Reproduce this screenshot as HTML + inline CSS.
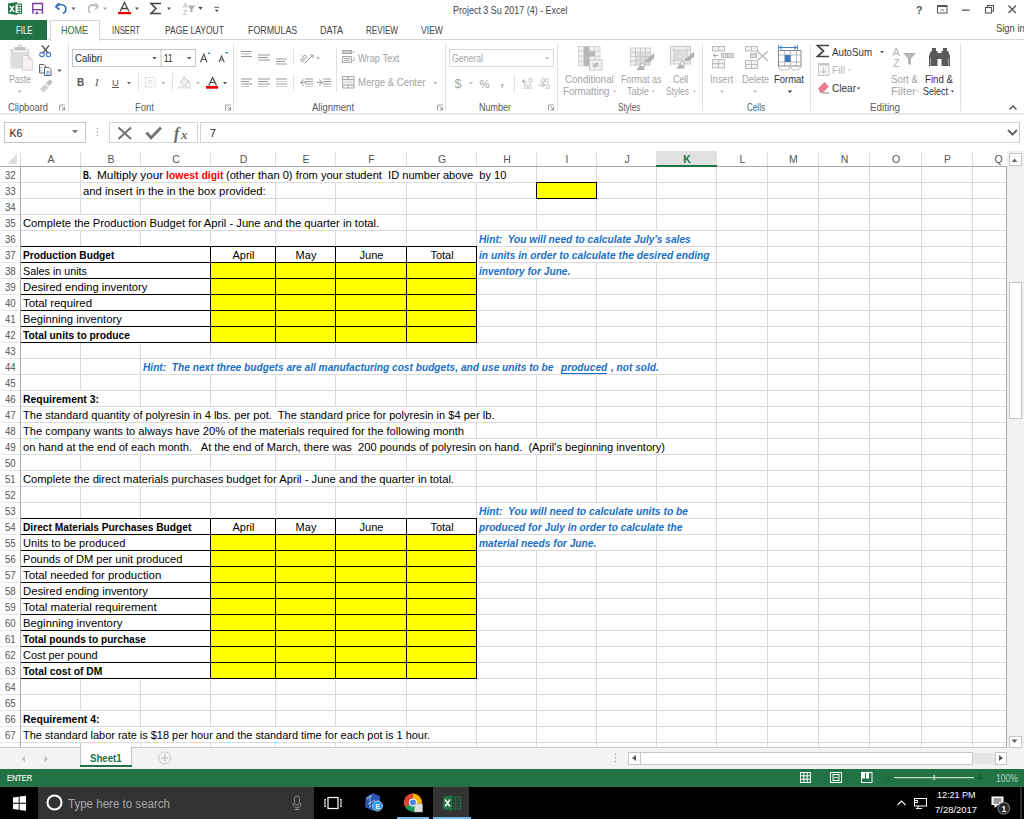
<!DOCTYPE html>
<html><head><meta charset="utf-8"><style>
html,body{margin:0;padding:0;width:1024px;height:819px;overflow:hidden;background:#fff;position:relative;font-family:"Liberation Sans", sans-serif;}
.t{position:absolute;white-space:pre;line-height:20px;font-family:"Liberation Sans", sans-serif;}
svg{position:absolute;overflow:visible}
</style></head><body>
<div style="position:absolute;left:0px;top:39px;width:1024px;height:1px;background:#d5d5d5;"></div>
<div style="position:absolute;left:0px;top:113px;width:1024px;height:1px;background:#dedede;"></div>
<div style="position:absolute;left:0px;top:114px;width:1024px;height:1px;background:#f2f2f2;"></div>
<div style="position:absolute;left:0px;top:151px;width:1006px;height:15px;background:#fff;"></div>
<div style="position:absolute;left:0px;top:747px;width:1024px;height:22px;background:#f3f3f3;"></div>
<div style="position:absolute;left:0px;top:747px;width:1007px;height:1px;background:#c6c6c6;"></div>
<div style="position:absolute;left:0px;top:769px;width:1024px;height:18px;background:#217346;"></div>
<div style="position:absolute;left:0px;top:787px;width:1024px;height:32px;background:#000;"></div>
<div style="position:absolute;left:80px;top:151px;width:1px;height:15px;background:#e1e1e1;"></div>
<div style="position:absolute;left:80px;top:166px;width:1px;height:16px;background:#dadada;"></div>
<div style="position:absolute;left:80px;top:182px;width:1px;height:16px;background:#dadada;"></div>
<div style="position:absolute;left:80px;top:198px;width:1px;height:16px;background:#dadada;"></div>
<div style="position:absolute;left:80px;top:230px;width:1px;height:16px;background:#dadada;"></div>
<div style="position:absolute;left:80px;top:342px;width:1px;height:16px;background:#dadada;"></div>
<div style="position:absolute;left:80px;top:358px;width:1px;height:16px;background:#dadada;"></div>
<div style="position:absolute;left:80px;top:374px;width:1px;height:16px;background:#dadada;"></div>
<div style="position:absolute;left:80px;top:454px;width:1px;height:16px;background:#dadada;"></div>
<div style="position:absolute;left:80px;top:486px;width:1px;height:16px;background:#dadada;"></div>
<div style="position:absolute;left:80px;top:502px;width:1px;height:16px;background:#dadada;"></div>
<div style="position:absolute;left:80px;top:678px;width:1px;height:16px;background:#dadada;"></div>
<div style="position:absolute;left:80px;top:694px;width:1px;height:16px;background:#dadada;"></div>
<div style="position:absolute;left:80px;top:742px;width:1px;height:5px;background:#dadada;"></div>
<div style="position:absolute;left:140px;top:151px;width:1px;height:15px;background:#e1e1e1;"></div>
<div style="position:absolute;left:140px;top:198px;width:1px;height:16px;background:#dadada;"></div>
<div style="position:absolute;left:140px;top:230px;width:1px;height:16px;background:#dadada;"></div>
<div style="position:absolute;left:140px;top:342px;width:1px;height:16px;background:#dadada;"></div>
<div style="position:absolute;left:140px;top:358px;width:1px;height:16px;background:#dadada;"></div>
<div style="position:absolute;left:140px;top:374px;width:1px;height:16px;background:#dadada;"></div>
<div style="position:absolute;left:140px;top:390px;width:1px;height:16px;background:#dadada;"></div>
<div style="position:absolute;left:140px;top:454px;width:1px;height:16px;background:#dadada;"></div>
<div style="position:absolute;left:140px;top:486px;width:1px;height:16px;background:#dadada;"></div>
<div style="position:absolute;left:140px;top:502px;width:1px;height:16px;background:#dadada;"></div>
<div style="position:absolute;left:140px;top:678px;width:1px;height:16px;background:#dadada;"></div>
<div style="position:absolute;left:140px;top:694px;width:1px;height:16px;background:#dadada;"></div>
<div style="position:absolute;left:140px;top:710px;width:1px;height:16px;background:#dadada;"></div>
<div style="position:absolute;left:140px;top:742px;width:1px;height:5px;background:#dadada;"></div>
<div style="position:absolute;left:210px;top:151px;width:1px;height:15px;background:#e1e1e1;"></div>
<div style="position:absolute;left:210px;top:198px;width:1px;height:16px;background:#dadada;"></div>
<div style="position:absolute;left:210px;top:230px;width:1px;height:16px;background:#dadada;"></div>
<div style="position:absolute;left:210px;top:246px;width:1px;height:16px;background:#dadada;"></div>
<div style="position:absolute;left:210px;top:262px;width:1px;height:16px;background:#dadada;"></div>
<div style="position:absolute;left:210px;top:278px;width:1px;height:16px;background:#dadada;"></div>
<div style="position:absolute;left:210px;top:294px;width:1px;height:16px;background:#dadada;"></div>
<div style="position:absolute;left:210px;top:310px;width:1px;height:16px;background:#dadada;"></div>
<div style="position:absolute;left:210px;top:326px;width:1px;height:16px;background:#dadada;"></div>
<div style="position:absolute;left:210px;top:342px;width:1px;height:16px;background:#dadada;"></div>
<div style="position:absolute;left:210px;top:374px;width:1px;height:16px;background:#dadada;"></div>
<div style="position:absolute;left:210px;top:390px;width:1px;height:16px;background:#dadada;"></div>
<div style="position:absolute;left:210px;top:454px;width:1px;height:16px;background:#dadada;"></div>
<div style="position:absolute;left:210px;top:486px;width:1px;height:16px;background:#dadada;"></div>
<div style="position:absolute;left:210px;top:502px;width:1px;height:16px;background:#dadada;"></div>
<div style="position:absolute;left:210px;top:518px;width:1px;height:16px;background:#dadada;"></div>
<div style="position:absolute;left:210px;top:534px;width:1px;height:16px;background:#dadada;"></div>
<div style="position:absolute;left:210px;top:550px;width:1px;height:16px;background:#dadada;"></div>
<div style="position:absolute;left:210px;top:566px;width:1px;height:16px;background:#dadada;"></div>
<div style="position:absolute;left:210px;top:582px;width:1px;height:16px;background:#dadada;"></div>
<div style="position:absolute;left:210px;top:598px;width:1px;height:16px;background:#dadada;"></div>
<div style="position:absolute;left:210px;top:614px;width:1px;height:16px;background:#dadada;"></div>
<div style="position:absolute;left:210px;top:630px;width:1px;height:16px;background:#dadada;"></div>
<div style="position:absolute;left:210px;top:646px;width:1px;height:16px;background:#dadada;"></div>
<div style="position:absolute;left:210px;top:662px;width:1px;height:16px;background:#dadada;"></div>
<div style="position:absolute;left:210px;top:678px;width:1px;height:16px;background:#dadada;"></div>
<div style="position:absolute;left:210px;top:694px;width:1px;height:16px;background:#dadada;"></div>
<div style="position:absolute;left:210px;top:710px;width:1px;height:16px;background:#dadada;"></div>
<div style="position:absolute;left:210px;top:742px;width:1px;height:5px;background:#dadada;"></div>
<div style="position:absolute;left:275px;top:151px;width:1px;height:15px;background:#e1e1e1;"></div>
<div style="position:absolute;left:275px;top:182px;width:1px;height:16px;background:#dadada;"></div>
<div style="position:absolute;left:275px;top:198px;width:1px;height:16px;background:#dadada;"></div>
<div style="position:absolute;left:275px;top:230px;width:1px;height:16px;background:#dadada;"></div>
<div style="position:absolute;left:275px;top:246px;width:1px;height:16px;background:#dadada;"></div>
<div style="position:absolute;left:275px;top:262px;width:1px;height:16px;background:#dadada;"></div>
<div style="position:absolute;left:275px;top:278px;width:1px;height:16px;background:#dadada;"></div>
<div style="position:absolute;left:275px;top:294px;width:1px;height:16px;background:#dadada;"></div>
<div style="position:absolute;left:275px;top:310px;width:1px;height:16px;background:#dadada;"></div>
<div style="position:absolute;left:275px;top:326px;width:1px;height:16px;background:#dadada;"></div>
<div style="position:absolute;left:275px;top:342px;width:1px;height:16px;background:#dadada;"></div>
<div style="position:absolute;left:275px;top:374px;width:1px;height:16px;background:#dadada;"></div>
<div style="position:absolute;left:275px;top:390px;width:1px;height:16px;background:#dadada;"></div>
<div style="position:absolute;left:275px;top:454px;width:1px;height:16px;background:#dadada;"></div>
<div style="position:absolute;left:275px;top:486px;width:1px;height:16px;background:#dadada;"></div>
<div style="position:absolute;left:275px;top:502px;width:1px;height:16px;background:#dadada;"></div>
<div style="position:absolute;left:275px;top:518px;width:1px;height:16px;background:#dadada;"></div>
<div style="position:absolute;left:275px;top:534px;width:1px;height:16px;background:#dadada;"></div>
<div style="position:absolute;left:275px;top:550px;width:1px;height:16px;background:#dadada;"></div>
<div style="position:absolute;left:275px;top:566px;width:1px;height:16px;background:#dadada;"></div>
<div style="position:absolute;left:275px;top:582px;width:1px;height:16px;background:#dadada;"></div>
<div style="position:absolute;left:275px;top:598px;width:1px;height:16px;background:#dadada;"></div>
<div style="position:absolute;left:275px;top:614px;width:1px;height:16px;background:#dadada;"></div>
<div style="position:absolute;left:275px;top:630px;width:1px;height:16px;background:#dadada;"></div>
<div style="position:absolute;left:275px;top:646px;width:1px;height:16px;background:#dadada;"></div>
<div style="position:absolute;left:275px;top:662px;width:1px;height:16px;background:#dadada;"></div>
<div style="position:absolute;left:275px;top:678px;width:1px;height:16px;background:#dadada;"></div>
<div style="position:absolute;left:275px;top:694px;width:1px;height:16px;background:#dadada;"></div>
<div style="position:absolute;left:275px;top:710px;width:1px;height:16px;background:#dadada;"></div>
<div style="position:absolute;left:275px;top:742px;width:1px;height:5px;background:#dadada;"></div>
<div style="position:absolute;left:335px;top:151px;width:1px;height:15px;background:#e1e1e1;"></div>
<div style="position:absolute;left:335px;top:182px;width:1px;height:16px;background:#dadada;"></div>
<div style="position:absolute;left:335px;top:198px;width:1px;height:16px;background:#dadada;"></div>
<div style="position:absolute;left:335px;top:230px;width:1px;height:16px;background:#dadada;"></div>
<div style="position:absolute;left:335px;top:246px;width:1px;height:16px;background:#dadada;"></div>
<div style="position:absolute;left:335px;top:262px;width:1px;height:16px;background:#dadada;"></div>
<div style="position:absolute;left:335px;top:278px;width:1px;height:16px;background:#dadada;"></div>
<div style="position:absolute;left:335px;top:294px;width:1px;height:16px;background:#dadada;"></div>
<div style="position:absolute;left:335px;top:310px;width:1px;height:16px;background:#dadada;"></div>
<div style="position:absolute;left:335px;top:326px;width:1px;height:16px;background:#dadada;"></div>
<div style="position:absolute;left:335px;top:342px;width:1px;height:16px;background:#dadada;"></div>
<div style="position:absolute;left:335px;top:374px;width:1px;height:16px;background:#dadada;"></div>
<div style="position:absolute;left:335px;top:390px;width:1px;height:16px;background:#dadada;"></div>
<div style="position:absolute;left:335px;top:454px;width:1px;height:16px;background:#dadada;"></div>
<div style="position:absolute;left:335px;top:486px;width:1px;height:16px;background:#dadada;"></div>
<div style="position:absolute;left:335px;top:502px;width:1px;height:16px;background:#dadada;"></div>
<div style="position:absolute;left:335px;top:518px;width:1px;height:16px;background:#dadada;"></div>
<div style="position:absolute;left:335px;top:534px;width:1px;height:16px;background:#dadada;"></div>
<div style="position:absolute;left:335px;top:550px;width:1px;height:16px;background:#dadada;"></div>
<div style="position:absolute;left:335px;top:566px;width:1px;height:16px;background:#dadada;"></div>
<div style="position:absolute;left:335px;top:582px;width:1px;height:16px;background:#dadada;"></div>
<div style="position:absolute;left:335px;top:598px;width:1px;height:16px;background:#dadada;"></div>
<div style="position:absolute;left:335px;top:614px;width:1px;height:16px;background:#dadada;"></div>
<div style="position:absolute;left:335px;top:630px;width:1px;height:16px;background:#dadada;"></div>
<div style="position:absolute;left:335px;top:646px;width:1px;height:16px;background:#dadada;"></div>
<div style="position:absolute;left:335px;top:662px;width:1px;height:16px;background:#dadada;"></div>
<div style="position:absolute;left:335px;top:678px;width:1px;height:16px;background:#dadada;"></div>
<div style="position:absolute;left:335px;top:694px;width:1px;height:16px;background:#dadada;"></div>
<div style="position:absolute;left:335px;top:710px;width:1px;height:16px;background:#dadada;"></div>
<div style="position:absolute;left:335px;top:742px;width:1px;height:5px;background:#dadada;"></div>
<div style="position:absolute;left:406px;top:151px;width:1px;height:15px;background:#e1e1e1;"></div>
<div style="position:absolute;left:406px;top:182px;width:1px;height:16px;background:#dadada;"></div>
<div style="position:absolute;left:406px;top:198px;width:1px;height:16px;background:#dadada;"></div>
<div style="position:absolute;left:406px;top:214px;width:1px;height:16px;background:#dadada;"></div>
<div style="position:absolute;left:406px;top:230px;width:1px;height:16px;background:#dadada;"></div>
<div style="position:absolute;left:406px;top:246px;width:1px;height:16px;background:#dadada;"></div>
<div style="position:absolute;left:406px;top:262px;width:1px;height:16px;background:#dadada;"></div>
<div style="position:absolute;left:406px;top:278px;width:1px;height:16px;background:#dadada;"></div>
<div style="position:absolute;left:406px;top:294px;width:1px;height:16px;background:#dadada;"></div>
<div style="position:absolute;left:406px;top:310px;width:1px;height:16px;background:#dadada;"></div>
<div style="position:absolute;left:406px;top:326px;width:1px;height:16px;background:#dadada;"></div>
<div style="position:absolute;left:406px;top:342px;width:1px;height:16px;background:#dadada;"></div>
<div style="position:absolute;left:406px;top:374px;width:1px;height:16px;background:#dadada;"></div>
<div style="position:absolute;left:406px;top:390px;width:1px;height:16px;background:#dadada;"></div>
<div style="position:absolute;left:406px;top:454px;width:1px;height:16px;background:#dadada;"></div>
<div style="position:absolute;left:406px;top:486px;width:1px;height:16px;background:#dadada;"></div>
<div style="position:absolute;left:406px;top:502px;width:1px;height:16px;background:#dadada;"></div>
<div style="position:absolute;left:406px;top:518px;width:1px;height:16px;background:#dadada;"></div>
<div style="position:absolute;left:406px;top:534px;width:1px;height:16px;background:#dadada;"></div>
<div style="position:absolute;left:406px;top:550px;width:1px;height:16px;background:#dadada;"></div>
<div style="position:absolute;left:406px;top:566px;width:1px;height:16px;background:#dadada;"></div>
<div style="position:absolute;left:406px;top:582px;width:1px;height:16px;background:#dadada;"></div>
<div style="position:absolute;left:406px;top:598px;width:1px;height:16px;background:#dadada;"></div>
<div style="position:absolute;left:406px;top:614px;width:1px;height:16px;background:#dadada;"></div>
<div style="position:absolute;left:406px;top:630px;width:1px;height:16px;background:#dadada;"></div>
<div style="position:absolute;left:406px;top:646px;width:1px;height:16px;background:#dadada;"></div>
<div style="position:absolute;left:406px;top:662px;width:1px;height:16px;background:#dadada;"></div>
<div style="position:absolute;left:406px;top:678px;width:1px;height:16px;background:#dadada;"></div>
<div style="position:absolute;left:406px;top:694px;width:1px;height:16px;background:#dadada;"></div>
<div style="position:absolute;left:406px;top:710px;width:1px;height:16px;background:#dadada;"></div>
<div style="position:absolute;left:406px;top:742px;width:1px;height:5px;background:#dadada;"></div>
<div style="position:absolute;left:476px;top:151px;width:1px;height:15px;background:#e1e1e1;"></div>
<div style="position:absolute;left:476px;top:182px;width:1px;height:16px;background:#dadada;"></div>
<div style="position:absolute;left:476px;top:198px;width:1px;height:16px;background:#dadada;"></div>
<div style="position:absolute;left:476px;top:214px;width:1px;height:16px;background:#dadada;"></div>
<div style="position:absolute;left:476px;top:230px;width:1px;height:16px;background:#dadada;"></div>
<div style="position:absolute;left:476px;top:246px;width:1px;height:16px;background:#dadada;"></div>
<div style="position:absolute;left:476px;top:262px;width:1px;height:16px;background:#dadada;"></div>
<div style="position:absolute;left:476px;top:278px;width:1px;height:16px;background:#dadada;"></div>
<div style="position:absolute;left:476px;top:294px;width:1px;height:16px;background:#dadada;"></div>
<div style="position:absolute;left:476px;top:310px;width:1px;height:16px;background:#dadada;"></div>
<div style="position:absolute;left:476px;top:326px;width:1px;height:16px;background:#dadada;"></div>
<div style="position:absolute;left:476px;top:342px;width:1px;height:16px;background:#dadada;"></div>
<div style="position:absolute;left:476px;top:374px;width:1px;height:16px;background:#dadada;"></div>
<div style="position:absolute;left:476px;top:390px;width:1px;height:16px;background:#dadada;"></div>
<div style="position:absolute;left:476px;top:422px;width:1px;height:16px;background:#dadada;"></div>
<div style="position:absolute;left:476px;top:454px;width:1px;height:16px;background:#dadada;"></div>
<div style="position:absolute;left:476px;top:470px;width:1px;height:16px;background:#dadada;"></div>
<div style="position:absolute;left:476px;top:486px;width:1px;height:16px;background:#dadada;"></div>
<div style="position:absolute;left:476px;top:502px;width:1px;height:16px;background:#dadada;"></div>
<div style="position:absolute;left:476px;top:518px;width:1px;height:16px;background:#dadada;"></div>
<div style="position:absolute;left:476px;top:534px;width:1px;height:16px;background:#dadada;"></div>
<div style="position:absolute;left:476px;top:550px;width:1px;height:16px;background:#dadada;"></div>
<div style="position:absolute;left:476px;top:566px;width:1px;height:16px;background:#dadada;"></div>
<div style="position:absolute;left:476px;top:582px;width:1px;height:16px;background:#dadada;"></div>
<div style="position:absolute;left:476px;top:598px;width:1px;height:16px;background:#dadada;"></div>
<div style="position:absolute;left:476px;top:614px;width:1px;height:16px;background:#dadada;"></div>
<div style="position:absolute;left:476px;top:630px;width:1px;height:16px;background:#dadada;"></div>
<div style="position:absolute;left:476px;top:646px;width:1px;height:16px;background:#dadada;"></div>
<div style="position:absolute;left:476px;top:662px;width:1px;height:16px;background:#dadada;"></div>
<div style="position:absolute;left:476px;top:678px;width:1px;height:16px;background:#dadada;"></div>
<div style="position:absolute;left:476px;top:694px;width:1px;height:16px;background:#dadada;"></div>
<div style="position:absolute;left:476px;top:710px;width:1px;height:16px;background:#dadada;"></div>
<div style="position:absolute;left:476px;top:726px;width:1px;height:16px;background:#dadada;"></div>
<div style="position:absolute;left:476px;top:742px;width:1px;height:5px;background:#dadada;"></div>
<div style="position:absolute;left:536px;top:151px;width:1px;height:15px;background:#e1e1e1;"></div>
<div style="position:absolute;left:536px;top:166px;width:1px;height:16px;background:#dadada;"></div>
<div style="position:absolute;left:536px;top:182px;width:1px;height:16px;background:#dadada;"></div>
<div style="position:absolute;left:536px;top:198px;width:1px;height:16px;background:#dadada;"></div>
<div style="position:absolute;left:536px;top:214px;width:1px;height:16px;background:#dadada;"></div>
<div style="position:absolute;left:536px;top:278px;width:1px;height:16px;background:#dadada;"></div>
<div style="position:absolute;left:536px;top:294px;width:1px;height:16px;background:#dadada;"></div>
<div style="position:absolute;left:536px;top:310px;width:1px;height:16px;background:#dadada;"></div>
<div style="position:absolute;left:536px;top:326px;width:1px;height:16px;background:#dadada;"></div>
<div style="position:absolute;left:536px;top:342px;width:1px;height:16px;background:#dadada;"></div>
<div style="position:absolute;left:536px;top:374px;width:1px;height:16px;background:#dadada;"></div>
<div style="position:absolute;left:536px;top:390px;width:1px;height:16px;background:#dadada;"></div>
<div style="position:absolute;left:536px;top:406px;width:1px;height:16px;background:#dadada;"></div>
<div style="position:absolute;left:536px;top:422px;width:1px;height:16px;background:#dadada;"></div>
<div style="position:absolute;left:536px;top:454px;width:1px;height:16px;background:#dadada;"></div>
<div style="position:absolute;left:536px;top:470px;width:1px;height:16px;background:#dadada;"></div>
<div style="position:absolute;left:536px;top:486px;width:1px;height:16px;background:#dadada;"></div>
<div style="position:absolute;left:536px;top:550px;width:1px;height:16px;background:#dadada;"></div>
<div style="position:absolute;left:536px;top:566px;width:1px;height:16px;background:#dadada;"></div>
<div style="position:absolute;left:536px;top:582px;width:1px;height:16px;background:#dadada;"></div>
<div style="position:absolute;left:536px;top:598px;width:1px;height:16px;background:#dadada;"></div>
<div style="position:absolute;left:536px;top:614px;width:1px;height:16px;background:#dadada;"></div>
<div style="position:absolute;left:536px;top:630px;width:1px;height:16px;background:#dadada;"></div>
<div style="position:absolute;left:536px;top:646px;width:1px;height:16px;background:#dadada;"></div>
<div style="position:absolute;left:536px;top:662px;width:1px;height:16px;background:#dadada;"></div>
<div style="position:absolute;left:536px;top:678px;width:1px;height:16px;background:#dadada;"></div>
<div style="position:absolute;left:536px;top:694px;width:1px;height:16px;background:#dadada;"></div>
<div style="position:absolute;left:536px;top:710px;width:1px;height:16px;background:#dadada;"></div>
<div style="position:absolute;left:536px;top:726px;width:1px;height:16px;background:#dadada;"></div>
<div style="position:absolute;left:536px;top:742px;width:1px;height:5px;background:#dadada;"></div>
<div style="position:absolute;left:596px;top:151px;width:1px;height:15px;background:#e1e1e1;"></div>
<div style="position:absolute;left:596px;top:166px;width:1px;height:16px;background:#dadada;"></div>
<div style="position:absolute;left:596px;top:182px;width:1px;height:16px;background:#dadada;"></div>
<div style="position:absolute;left:596px;top:198px;width:1px;height:16px;background:#dadada;"></div>
<div style="position:absolute;left:596px;top:214px;width:1px;height:16px;background:#dadada;"></div>
<div style="position:absolute;left:596px;top:262px;width:1px;height:16px;background:#dadada;"></div>
<div style="position:absolute;left:596px;top:278px;width:1px;height:16px;background:#dadada;"></div>
<div style="position:absolute;left:596px;top:294px;width:1px;height:16px;background:#dadada;"></div>
<div style="position:absolute;left:596px;top:310px;width:1px;height:16px;background:#dadada;"></div>
<div style="position:absolute;left:596px;top:326px;width:1px;height:16px;background:#dadada;"></div>
<div style="position:absolute;left:596px;top:342px;width:1px;height:16px;background:#dadada;"></div>
<div style="position:absolute;left:596px;top:374px;width:1px;height:16px;background:#dadada;"></div>
<div style="position:absolute;left:596px;top:390px;width:1px;height:16px;background:#dadada;"></div>
<div style="position:absolute;left:596px;top:406px;width:1px;height:16px;background:#dadada;"></div>
<div style="position:absolute;left:596px;top:422px;width:1px;height:16px;background:#dadada;"></div>
<div style="position:absolute;left:596px;top:454px;width:1px;height:16px;background:#dadada;"></div>
<div style="position:absolute;left:596px;top:470px;width:1px;height:16px;background:#dadada;"></div>
<div style="position:absolute;left:596px;top:486px;width:1px;height:16px;background:#dadada;"></div>
<div style="position:absolute;left:596px;top:550px;width:1px;height:16px;background:#dadada;"></div>
<div style="position:absolute;left:596px;top:566px;width:1px;height:16px;background:#dadada;"></div>
<div style="position:absolute;left:596px;top:582px;width:1px;height:16px;background:#dadada;"></div>
<div style="position:absolute;left:596px;top:598px;width:1px;height:16px;background:#dadada;"></div>
<div style="position:absolute;left:596px;top:614px;width:1px;height:16px;background:#dadada;"></div>
<div style="position:absolute;left:596px;top:630px;width:1px;height:16px;background:#dadada;"></div>
<div style="position:absolute;left:596px;top:646px;width:1px;height:16px;background:#dadada;"></div>
<div style="position:absolute;left:596px;top:662px;width:1px;height:16px;background:#dadada;"></div>
<div style="position:absolute;left:596px;top:678px;width:1px;height:16px;background:#dadada;"></div>
<div style="position:absolute;left:596px;top:694px;width:1px;height:16px;background:#dadada;"></div>
<div style="position:absolute;left:596px;top:710px;width:1px;height:16px;background:#dadada;"></div>
<div style="position:absolute;left:596px;top:726px;width:1px;height:16px;background:#dadada;"></div>
<div style="position:absolute;left:596px;top:742px;width:1px;height:5px;background:#dadada;"></div>
<div style="position:absolute;left:656px;top:151px;width:1px;height:15px;background:#e1e1e1;"></div>
<div style="position:absolute;left:656px;top:166px;width:1px;height:16px;background:#dadada;"></div>
<div style="position:absolute;left:656px;top:182px;width:1px;height:16px;background:#dadada;"></div>
<div style="position:absolute;left:656px;top:198px;width:1px;height:16px;background:#dadada;"></div>
<div style="position:absolute;left:656px;top:214px;width:1px;height:16px;background:#dadada;"></div>
<div style="position:absolute;left:656px;top:262px;width:1px;height:16px;background:#dadada;"></div>
<div style="position:absolute;left:656px;top:278px;width:1px;height:16px;background:#dadada;"></div>
<div style="position:absolute;left:656px;top:294px;width:1px;height:16px;background:#dadada;"></div>
<div style="position:absolute;left:656px;top:310px;width:1px;height:16px;background:#dadada;"></div>
<div style="position:absolute;left:656px;top:326px;width:1px;height:16px;background:#dadada;"></div>
<div style="position:absolute;left:656px;top:342px;width:1px;height:16px;background:#dadada;"></div>
<div style="position:absolute;left:656px;top:374px;width:1px;height:16px;background:#dadada;"></div>
<div style="position:absolute;left:656px;top:390px;width:1px;height:16px;background:#dadada;"></div>
<div style="position:absolute;left:656px;top:406px;width:1px;height:16px;background:#dadada;"></div>
<div style="position:absolute;left:656px;top:422px;width:1px;height:16px;background:#dadada;"></div>
<div style="position:absolute;left:656px;top:454px;width:1px;height:16px;background:#dadada;"></div>
<div style="position:absolute;left:656px;top:470px;width:1px;height:16px;background:#dadada;"></div>
<div style="position:absolute;left:656px;top:486px;width:1px;height:16px;background:#dadada;"></div>
<div style="position:absolute;left:656px;top:534px;width:1px;height:16px;background:#dadada;"></div>
<div style="position:absolute;left:656px;top:550px;width:1px;height:16px;background:#dadada;"></div>
<div style="position:absolute;left:656px;top:566px;width:1px;height:16px;background:#dadada;"></div>
<div style="position:absolute;left:656px;top:582px;width:1px;height:16px;background:#dadada;"></div>
<div style="position:absolute;left:656px;top:598px;width:1px;height:16px;background:#dadada;"></div>
<div style="position:absolute;left:656px;top:614px;width:1px;height:16px;background:#dadada;"></div>
<div style="position:absolute;left:656px;top:630px;width:1px;height:16px;background:#dadada;"></div>
<div style="position:absolute;left:656px;top:646px;width:1px;height:16px;background:#dadada;"></div>
<div style="position:absolute;left:656px;top:662px;width:1px;height:16px;background:#dadada;"></div>
<div style="position:absolute;left:656px;top:678px;width:1px;height:16px;background:#dadada;"></div>
<div style="position:absolute;left:656px;top:694px;width:1px;height:16px;background:#dadada;"></div>
<div style="position:absolute;left:656px;top:710px;width:1px;height:16px;background:#dadada;"></div>
<div style="position:absolute;left:656px;top:726px;width:1px;height:16px;background:#dadada;"></div>
<div style="position:absolute;left:656px;top:742px;width:1px;height:5px;background:#dadada;"></div>
<div style="position:absolute;left:716px;top:151px;width:1px;height:15px;background:#e1e1e1;"></div>
<div style="position:absolute;left:716px;top:166px;width:1px;height:16px;background:#dadada;"></div>
<div style="position:absolute;left:716px;top:182px;width:1px;height:16px;background:#dadada;"></div>
<div style="position:absolute;left:716px;top:198px;width:1px;height:16px;background:#dadada;"></div>
<div style="position:absolute;left:716px;top:214px;width:1px;height:16px;background:#dadada;"></div>
<div style="position:absolute;left:716px;top:230px;width:1px;height:16px;background:#dadada;"></div>
<div style="position:absolute;left:716px;top:246px;width:1px;height:16px;background:#dadada;"></div>
<div style="position:absolute;left:716px;top:262px;width:1px;height:16px;background:#dadada;"></div>
<div style="position:absolute;left:716px;top:278px;width:1px;height:16px;background:#dadada;"></div>
<div style="position:absolute;left:716px;top:294px;width:1px;height:16px;background:#dadada;"></div>
<div style="position:absolute;left:716px;top:310px;width:1px;height:16px;background:#dadada;"></div>
<div style="position:absolute;left:716px;top:326px;width:1px;height:16px;background:#dadada;"></div>
<div style="position:absolute;left:716px;top:342px;width:1px;height:16px;background:#dadada;"></div>
<div style="position:absolute;left:716px;top:358px;width:1px;height:16px;background:#dadada;"></div>
<div style="position:absolute;left:716px;top:374px;width:1px;height:16px;background:#dadada;"></div>
<div style="position:absolute;left:716px;top:390px;width:1px;height:16px;background:#dadada;"></div>
<div style="position:absolute;left:716px;top:406px;width:1px;height:16px;background:#dadada;"></div>
<div style="position:absolute;left:716px;top:422px;width:1px;height:16px;background:#dadada;"></div>
<div style="position:absolute;left:716px;top:438px;width:1px;height:16px;background:#dadada;"></div>
<div style="position:absolute;left:716px;top:454px;width:1px;height:16px;background:#dadada;"></div>
<div style="position:absolute;left:716px;top:470px;width:1px;height:16px;background:#dadada;"></div>
<div style="position:absolute;left:716px;top:486px;width:1px;height:16px;background:#dadada;"></div>
<div style="position:absolute;left:716px;top:502px;width:1px;height:16px;background:#dadada;"></div>
<div style="position:absolute;left:716px;top:518px;width:1px;height:16px;background:#dadada;"></div>
<div style="position:absolute;left:716px;top:534px;width:1px;height:16px;background:#dadada;"></div>
<div style="position:absolute;left:716px;top:550px;width:1px;height:16px;background:#dadada;"></div>
<div style="position:absolute;left:716px;top:566px;width:1px;height:16px;background:#dadada;"></div>
<div style="position:absolute;left:716px;top:582px;width:1px;height:16px;background:#dadada;"></div>
<div style="position:absolute;left:716px;top:598px;width:1px;height:16px;background:#dadada;"></div>
<div style="position:absolute;left:716px;top:614px;width:1px;height:16px;background:#dadada;"></div>
<div style="position:absolute;left:716px;top:630px;width:1px;height:16px;background:#dadada;"></div>
<div style="position:absolute;left:716px;top:646px;width:1px;height:16px;background:#dadada;"></div>
<div style="position:absolute;left:716px;top:662px;width:1px;height:16px;background:#dadada;"></div>
<div style="position:absolute;left:716px;top:678px;width:1px;height:16px;background:#dadada;"></div>
<div style="position:absolute;left:716px;top:694px;width:1px;height:16px;background:#dadada;"></div>
<div style="position:absolute;left:716px;top:710px;width:1px;height:16px;background:#dadada;"></div>
<div style="position:absolute;left:716px;top:726px;width:1px;height:16px;background:#dadada;"></div>
<div style="position:absolute;left:716px;top:742px;width:1px;height:5px;background:#dadada;"></div>
<div style="position:absolute;left:767px;top:151px;width:1px;height:15px;background:#e1e1e1;"></div>
<div style="position:absolute;left:767px;top:166px;width:1px;height:16px;background:#dadada;"></div>
<div style="position:absolute;left:767px;top:182px;width:1px;height:16px;background:#dadada;"></div>
<div style="position:absolute;left:767px;top:198px;width:1px;height:16px;background:#dadada;"></div>
<div style="position:absolute;left:767px;top:214px;width:1px;height:16px;background:#dadada;"></div>
<div style="position:absolute;left:767px;top:230px;width:1px;height:16px;background:#dadada;"></div>
<div style="position:absolute;left:767px;top:246px;width:1px;height:16px;background:#dadada;"></div>
<div style="position:absolute;left:767px;top:262px;width:1px;height:16px;background:#dadada;"></div>
<div style="position:absolute;left:767px;top:278px;width:1px;height:16px;background:#dadada;"></div>
<div style="position:absolute;left:767px;top:294px;width:1px;height:16px;background:#dadada;"></div>
<div style="position:absolute;left:767px;top:310px;width:1px;height:16px;background:#dadada;"></div>
<div style="position:absolute;left:767px;top:326px;width:1px;height:16px;background:#dadada;"></div>
<div style="position:absolute;left:767px;top:342px;width:1px;height:16px;background:#dadada;"></div>
<div style="position:absolute;left:767px;top:358px;width:1px;height:16px;background:#dadada;"></div>
<div style="position:absolute;left:767px;top:374px;width:1px;height:16px;background:#dadada;"></div>
<div style="position:absolute;left:767px;top:390px;width:1px;height:16px;background:#dadada;"></div>
<div style="position:absolute;left:767px;top:406px;width:1px;height:16px;background:#dadada;"></div>
<div style="position:absolute;left:767px;top:422px;width:1px;height:16px;background:#dadada;"></div>
<div style="position:absolute;left:767px;top:438px;width:1px;height:16px;background:#dadada;"></div>
<div style="position:absolute;left:767px;top:454px;width:1px;height:16px;background:#dadada;"></div>
<div style="position:absolute;left:767px;top:470px;width:1px;height:16px;background:#dadada;"></div>
<div style="position:absolute;left:767px;top:486px;width:1px;height:16px;background:#dadada;"></div>
<div style="position:absolute;left:767px;top:502px;width:1px;height:16px;background:#dadada;"></div>
<div style="position:absolute;left:767px;top:518px;width:1px;height:16px;background:#dadada;"></div>
<div style="position:absolute;left:767px;top:534px;width:1px;height:16px;background:#dadada;"></div>
<div style="position:absolute;left:767px;top:550px;width:1px;height:16px;background:#dadada;"></div>
<div style="position:absolute;left:767px;top:566px;width:1px;height:16px;background:#dadada;"></div>
<div style="position:absolute;left:767px;top:582px;width:1px;height:16px;background:#dadada;"></div>
<div style="position:absolute;left:767px;top:598px;width:1px;height:16px;background:#dadada;"></div>
<div style="position:absolute;left:767px;top:614px;width:1px;height:16px;background:#dadada;"></div>
<div style="position:absolute;left:767px;top:630px;width:1px;height:16px;background:#dadada;"></div>
<div style="position:absolute;left:767px;top:646px;width:1px;height:16px;background:#dadada;"></div>
<div style="position:absolute;left:767px;top:662px;width:1px;height:16px;background:#dadada;"></div>
<div style="position:absolute;left:767px;top:678px;width:1px;height:16px;background:#dadada;"></div>
<div style="position:absolute;left:767px;top:694px;width:1px;height:16px;background:#dadada;"></div>
<div style="position:absolute;left:767px;top:710px;width:1px;height:16px;background:#dadada;"></div>
<div style="position:absolute;left:767px;top:726px;width:1px;height:16px;background:#dadada;"></div>
<div style="position:absolute;left:767px;top:742px;width:1px;height:5px;background:#dadada;"></div>
<div style="position:absolute;left:818px;top:151px;width:1px;height:15px;background:#e1e1e1;"></div>
<div style="position:absolute;left:818px;top:166px;width:1px;height:16px;background:#dadada;"></div>
<div style="position:absolute;left:818px;top:182px;width:1px;height:16px;background:#dadada;"></div>
<div style="position:absolute;left:818px;top:198px;width:1px;height:16px;background:#dadada;"></div>
<div style="position:absolute;left:818px;top:214px;width:1px;height:16px;background:#dadada;"></div>
<div style="position:absolute;left:818px;top:230px;width:1px;height:16px;background:#dadada;"></div>
<div style="position:absolute;left:818px;top:246px;width:1px;height:16px;background:#dadada;"></div>
<div style="position:absolute;left:818px;top:262px;width:1px;height:16px;background:#dadada;"></div>
<div style="position:absolute;left:818px;top:278px;width:1px;height:16px;background:#dadada;"></div>
<div style="position:absolute;left:818px;top:294px;width:1px;height:16px;background:#dadada;"></div>
<div style="position:absolute;left:818px;top:310px;width:1px;height:16px;background:#dadada;"></div>
<div style="position:absolute;left:818px;top:326px;width:1px;height:16px;background:#dadada;"></div>
<div style="position:absolute;left:818px;top:342px;width:1px;height:16px;background:#dadada;"></div>
<div style="position:absolute;left:818px;top:358px;width:1px;height:16px;background:#dadada;"></div>
<div style="position:absolute;left:818px;top:374px;width:1px;height:16px;background:#dadada;"></div>
<div style="position:absolute;left:818px;top:390px;width:1px;height:16px;background:#dadada;"></div>
<div style="position:absolute;left:818px;top:406px;width:1px;height:16px;background:#dadada;"></div>
<div style="position:absolute;left:818px;top:422px;width:1px;height:16px;background:#dadada;"></div>
<div style="position:absolute;left:818px;top:438px;width:1px;height:16px;background:#dadada;"></div>
<div style="position:absolute;left:818px;top:454px;width:1px;height:16px;background:#dadada;"></div>
<div style="position:absolute;left:818px;top:470px;width:1px;height:16px;background:#dadada;"></div>
<div style="position:absolute;left:818px;top:486px;width:1px;height:16px;background:#dadada;"></div>
<div style="position:absolute;left:818px;top:502px;width:1px;height:16px;background:#dadada;"></div>
<div style="position:absolute;left:818px;top:518px;width:1px;height:16px;background:#dadada;"></div>
<div style="position:absolute;left:818px;top:534px;width:1px;height:16px;background:#dadada;"></div>
<div style="position:absolute;left:818px;top:550px;width:1px;height:16px;background:#dadada;"></div>
<div style="position:absolute;left:818px;top:566px;width:1px;height:16px;background:#dadada;"></div>
<div style="position:absolute;left:818px;top:582px;width:1px;height:16px;background:#dadada;"></div>
<div style="position:absolute;left:818px;top:598px;width:1px;height:16px;background:#dadada;"></div>
<div style="position:absolute;left:818px;top:614px;width:1px;height:16px;background:#dadada;"></div>
<div style="position:absolute;left:818px;top:630px;width:1px;height:16px;background:#dadada;"></div>
<div style="position:absolute;left:818px;top:646px;width:1px;height:16px;background:#dadada;"></div>
<div style="position:absolute;left:818px;top:662px;width:1px;height:16px;background:#dadada;"></div>
<div style="position:absolute;left:818px;top:678px;width:1px;height:16px;background:#dadada;"></div>
<div style="position:absolute;left:818px;top:694px;width:1px;height:16px;background:#dadada;"></div>
<div style="position:absolute;left:818px;top:710px;width:1px;height:16px;background:#dadada;"></div>
<div style="position:absolute;left:818px;top:726px;width:1px;height:16px;background:#dadada;"></div>
<div style="position:absolute;left:818px;top:742px;width:1px;height:5px;background:#dadada;"></div>
<div style="position:absolute;left:869px;top:151px;width:1px;height:15px;background:#e1e1e1;"></div>
<div style="position:absolute;left:869px;top:166px;width:1px;height:16px;background:#dadada;"></div>
<div style="position:absolute;left:869px;top:182px;width:1px;height:16px;background:#dadada;"></div>
<div style="position:absolute;left:869px;top:198px;width:1px;height:16px;background:#dadada;"></div>
<div style="position:absolute;left:869px;top:214px;width:1px;height:16px;background:#dadada;"></div>
<div style="position:absolute;left:869px;top:230px;width:1px;height:16px;background:#dadada;"></div>
<div style="position:absolute;left:869px;top:246px;width:1px;height:16px;background:#dadada;"></div>
<div style="position:absolute;left:869px;top:262px;width:1px;height:16px;background:#dadada;"></div>
<div style="position:absolute;left:869px;top:278px;width:1px;height:16px;background:#dadada;"></div>
<div style="position:absolute;left:869px;top:294px;width:1px;height:16px;background:#dadada;"></div>
<div style="position:absolute;left:869px;top:310px;width:1px;height:16px;background:#dadada;"></div>
<div style="position:absolute;left:869px;top:326px;width:1px;height:16px;background:#dadada;"></div>
<div style="position:absolute;left:869px;top:342px;width:1px;height:16px;background:#dadada;"></div>
<div style="position:absolute;left:869px;top:358px;width:1px;height:16px;background:#dadada;"></div>
<div style="position:absolute;left:869px;top:374px;width:1px;height:16px;background:#dadada;"></div>
<div style="position:absolute;left:869px;top:390px;width:1px;height:16px;background:#dadada;"></div>
<div style="position:absolute;left:869px;top:406px;width:1px;height:16px;background:#dadada;"></div>
<div style="position:absolute;left:869px;top:422px;width:1px;height:16px;background:#dadada;"></div>
<div style="position:absolute;left:869px;top:438px;width:1px;height:16px;background:#dadada;"></div>
<div style="position:absolute;left:869px;top:454px;width:1px;height:16px;background:#dadada;"></div>
<div style="position:absolute;left:869px;top:470px;width:1px;height:16px;background:#dadada;"></div>
<div style="position:absolute;left:869px;top:486px;width:1px;height:16px;background:#dadada;"></div>
<div style="position:absolute;left:869px;top:502px;width:1px;height:16px;background:#dadada;"></div>
<div style="position:absolute;left:869px;top:518px;width:1px;height:16px;background:#dadada;"></div>
<div style="position:absolute;left:869px;top:534px;width:1px;height:16px;background:#dadada;"></div>
<div style="position:absolute;left:869px;top:550px;width:1px;height:16px;background:#dadada;"></div>
<div style="position:absolute;left:869px;top:566px;width:1px;height:16px;background:#dadada;"></div>
<div style="position:absolute;left:869px;top:582px;width:1px;height:16px;background:#dadada;"></div>
<div style="position:absolute;left:869px;top:598px;width:1px;height:16px;background:#dadada;"></div>
<div style="position:absolute;left:869px;top:614px;width:1px;height:16px;background:#dadada;"></div>
<div style="position:absolute;left:869px;top:630px;width:1px;height:16px;background:#dadada;"></div>
<div style="position:absolute;left:869px;top:646px;width:1px;height:16px;background:#dadada;"></div>
<div style="position:absolute;left:869px;top:662px;width:1px;height:16px;background:#dadada;"></div>
<div style="position:absolute;left:869px;top:678px;width:1px;height:16px;background:#dadada;"></div>
<div style="position:absolute;left:869px;top:694px;width:1px;height:16px;background:#dadada;"></div>
<div style="position:absolute;left:869px;top:710px;width:1px;height:16px;background:#dadada;"></div>
<div style="position:absolute;left:869px;top:726px;width:1px;height:16px;background:#dadada;"></div>
<div style="position:absolute;left:869px;top:742px;width:1px;height:5px;background:#dadada;"></div>
<div style="position:absolute;left:921px;top:151px;width:1px;height:15px;background:#e1e1e1;"></div>
<div style="position:absolute;left:921px;top:166px;width:1px;height:16px;background:#dadada;"></div>
<div style="position:absolute;left:921px;top:182px;width:1px;height:16px;background:#dadada;"></div>
<div style="position:absolute;left:921px;top:198px;width:1px;height:16px;background:#dadada;"></div>
<div style="position:absolute;left:921px;top:214px;width:1px;height:16px;background:#dadada;"></div>
<div style="position:absolute;left:921px;top:230px;width:1px;height:16px;background:#dadada;"></div>
<div style="position:absolute;left:921px;top:246px;width:1px;height:16px;background:#dadada;"></div>
<div style="position:absolute;left:921px;top:262px;width:1px;height:16px;background:#dadada;"></div>
<div style="position:absolute;left:921px;top:278px;width:1px;height:16px;background:#dadada;"></div>
<div style="position:absolute;left:921px;top:294px;width:1px;height:16px;background:#dadada;"></div>
<div style="position:absolute;left:921px;top:310px;width:1px;height:16px;background:#dadada;"></div>
<div style="position:absolute;left:921px;top:326px;width:1px;height:16px;background:#dadada;"></div>
<div style="position:absolute;left:921px;top:342px;width:1px;height:16px;background:#dadada;"></div>
<div style="position:absolute;left:921px;top:358px;width:1px;height:16px;background:#dadada;"></div>
<div style="position:absolute;left:921px;top:374px;width:1px;height:16px;background:#dadada;"></div>
<div style="position:absolute;left:921px;top:390px;width:1px;height:16px;background:#dadada;"></div>
<div style="position:absolute;left:921px;top:406px;width:1px;height:16px;background:#dadada;"></div>
<div style="position:absolute;left:921px;top:422px;width:1px;height:16px;background:#dadada;"></div>
<div style="position:absolute;left:921px;top:438px;width:1px;height:16px;background:#dadada;"></div>
<div style="position:absolute;left:921px;top:454px;width:1px;height:16px;background:#dadada;"></div>
<div style="position:absolute;left:921px;top:470px;width:1px;height:16px;background:#dadada;"></div>
<div style="position:absolute;left:921px;top:486px;width:1px;height:16px;background:#dadada;"></div>
<div style="position:absolute;left:921px;top:502px;width:1px;height:16px;background:#dadada;"></div>
<div style="position:absolute;left:921px;top:518px;width:1px;height:16px;background:#dadada;"></div>
<div style="position:absolute;left:921px;top:534px;width:1px;height:16px;background:#dadada;"></div>
<div style="position:absolute;left:921px;top:550px;width:1px;height:16px;background:#dadada;"></div>
<div style="position:absolute;left:921px;top:566px;width:1px;height:16px;background:#dadada;"></div>
<div style="position:absolute;left:921px;top:582px;width:1px;height:16px;background:#dadada;"></div>
<div style="position:absolute;left:921px;top:598px;width:1px;height:16px;background:#dadada;"></div>
<div style="position:absolute;left:921px;top:614px;width:1px;height:16px;background:#dadada;"></div>
<div style="position:absolute;left:921px;top:630px;width:1px;height:16px;background:#dadada;"></div>
<div style="position:absolute;left:921px;top:646px;width:1px;height:16px;background:#dadada;"></div>
<div style="position:absolute;left:921px;top:662px;width:1px;height:16px;background:#dadada;"></div>
<div style="position:absolute;left:921px;top:678px;width:1px;height:16px;background:#dadada;"></div>
<div style="position:absolute;left:921px;top:694px;width:1px;height:16px;background:#dadada;"></div>
<div style="position:absolute;left:921px;top:710px;width:1px;height:16px;background:#dadada;"></div>
<div style="position:absolute;left:921px;top:726px;width:1px;height:16px;background:#dadada;"></div>
<div style="position:absolute;left:921px;top:742px;width:1px;height:5px;background:#dadada;"></div>
<div style="position:absolute;left:972px;top:151px;width:1px;height:15px;background:#e1e1e1;"></div>
<div style="position:absolute;left:972px;top:166px;width:1px;height:16px;background:#dadada;"></div>
<div style="position:absolute;left:972px;top:182px;width:1px;height:16px;background:#dadada;"></div>
<div style="position:absolute;left:972px;top:198px;width:1px;height:16px;background:#dadada;"></div>
<div style="position:absolute;left:972px;top:214px;width:1px;height:16px;background:#dadada;"></div>
<div style="position:absolute;left:972px;top:230px;width:1px;height:16px;background:#dadada;"></div>
<div style="position:absolute;left:972px;top:246px;width:1px;height:16px;background:#dadada;"></div>
<div style="position:absolute;left:972px;top:262px;width:1px;height:16px;background:#dadada;"></div>
<div style="position:absolute;left:972px;top:278px;width:1px;height:16px;background:#dadada;"></div>
<div style="position:absolute;left:972px;top:294px;width:1px;height:16px;background:#dadada;"></div>
<div style="position:absolute;left:972px;top:310px;width:1px;height:16px;background:#dadada;"></div>
<div style="position:absolute;left:972px;top:326px;width:1px;height:16px;background:#dadada;"></div>
<div style="position:absolute;left:972px;top:342px;width:1px;height:16px;background:#dadada;"></div>
<div style="position:absolute;left:972px;top:358px;width:1px;height:16px;background:#dadada;"></div>
<div style="position:absolute;left:972px;top:374px;width:1px;height:16px;background:#dadada;"></div>
<div style="position:absolute;left:972px;top:390px;width:1px;height:16px;background:#dadada;"></div>
<div style="position:absolute;left:972px;top:406px;width:1px;height:16px;background:#dadada;"></div>
<div style="position:absolute;left:972px;top:422px;width:1px;height:16px;background:#dadada;"></div>
<div style="position:absolute;left:972px;top:438px;width:1px;height:16px;background:#dadada;"></div>
<div style="position:absolute;left:972px;top:454px;width:1px;height:16px;background:#dadada;"></div>
<div style="position:absolute;left:972px;top:470px;width:1px;height:16px;background:#dadada;"></div>
<div style="position:absolute;left:972px;top:486px;width:1px;height:16px;background:#dadada;"></div>
<div style="position:absolute;left:972px;top:502px;width:1px;height:16px;background:#dadada;"></div>
<div style="position:absolute;left:972px;top:518px;width:1px;height:16px;background:#dadada;"></div>
<div style="position:absolute;left:972px;top:534px;width:1px;height:16px;background:#dadada;"></div>
<div style="position:absolute;left:972px;top:550px;width:1px;height:16px;background:#dadada;"></div>
<div style="position:absolute;left:972px;top:566px;width:1px;height:16px;background:#dadada;"></div>
<div style="position:absolute;left:972px;top:582px;width:1px;height:16px;background:#dadada;"></div>
<div style="position:absolute;left:972px;top:598px;width:1px;height:16px;background:#dadada;"></div>
<div style="position:absolute;left:972px;top:614px;width:1px;height:16px;background:#dadada;"></div>
<div style="position:absolute;left:972px;top:630px;width:1px;height:16px;background:#dadada;"></div>
<div style="position:absolute;left:972px;top:646px;width:1px;height:16px;background:#dadada;"></div>
<div style="position:absolute;left:972px;top:662px;width:1px;height:16px;background:#dadada;"></div>
<div style="position:absolute;left:972px;top:678px;width:1px;height:16px;background:#dadada;"></div>
<div style="position:absolute;left:972px;top:694px;width:1px;height:16px;background:#dadada;"></div>
<div style="position:absolute;left:972px;top:710px;width:1px;height:16px;background:#dadada;"></div>
<div style="position:absolute;left:972px;top:726px;width:1px;height:16px;background:#dadada;"></div>
<div style="position:absolute;left:972px;top:742px;width:1px;height:5px;background:#dadada;"></div>
<div style="position:absolute;left:21px;top:182px;width:985px;height:1px;background:#dadada;"></div>
<div style="position:absolute;left:21px;top:198px;width:985px;height:1px;background:#dadada;"></div>
<div style="position:absolute;left:21px;top:214px;width:985px;height:1px;background:#dadada;"></div>
<div style="position:absolute;left:21px;top:230px;width:985px;height:1px;background:#dadada;"></div>
<div style="position:absolute;left:21px;top:246px;width:985px;height:1px;background:#dadada;"></div>
<div style="position:absolute;left:21px;top:262px;width:985px;height:1px;background:#dadada;"></div>
<div style="position:absolute;left:21px;top:278px;width:985px;height:1px;background:#dadada;"></div>
<div style="position:absolute;left:21px;top:294px;width:985px;height:1px;background:#dadada;"></div>
<div style="position:absolute;left:21px;top:310px;width:985px;height:1px;background:#dadada;"></div>
<div style="position:absolute;left:21px;top:326px;width:985px;height:1px;background:#dadada;"></div>
<div style="position:absolute;left:21px;top:342px;width:985px;height:1px;background:#dadada;"></div>
<div style="position:absolute;left:21px;top:358px;width:985px;height:1px;background:#dadada;"></div>
<div style="position:absolute;left:21px;top:374px;width:985px;height:1px;background:#dadada;"></div>
<div style="position:absolute;left:21px;top:390px;width:985px;height:1px;background:#dadada;"></div>
<div style="position:absolute;left:21px;top:406px;width:985px;height:1px;background:#dadada;"></div>
<div style="position:absolute;left:21px;top:422px;width:985px;height:1px;background:#dadada;"></div>
<div style="position:absolute;left:21px;top:438px;width:985px;height:1px;background:#dadada;"></div>
<div style="position:absolute;left:21px;top:454px;width:985px;height:1px;background:#dadada;"></div>
<div style="position:absolute;left:21px;top:470px;width:985px;height:1px;background:#dadada;"></div>
<div style="position:absolute;left:21px;top:486px;width:985px;height:1px;background:#dadada;"></div>
<div style="position:absolute;left:21px;top:502px;width:985px;height:1px;background:#dadada;"></div>
<div style="position:absolute;left:21px;top:518px;width:985px;height:1px;background:#dadada;"></div>
<div style="position:absolute;left:21px;top:534px;width:985px;height:1px;background:#dadada;"></div>
<div style="position:absolute;left:21px;top:550px;width:985px;height:1px;background:#dadada;"></div>
<div style="position:absolute;left:21px;top:566px;width:985px;height:1px;background:#dadada;"></div>
<div style="position:absolute;left:21px;top:582px;width:985px;height:1px;background:#dadada;"></div>
<div style="position:absolute;left:21px;top:598px;width:985px;height:1px;background:#dadada;"></div>
<div style="position:absolute;left:21px;top:614px;width:985px;height:1px;background:#dadada;"></div>
<div style="position:absolute;left:21px;top:630px;width:985px;height:1px;background:#dadada;"></div>
<div style="position:absolute;left:21px;top:646px;width:985px;height:1px;background:#dadada;"></div>
<div style="position:absolute;left:21px;top:662px;width:985px;height:1px;background:#dadada;"></div>
<div style="position:absolute;left:21px;top:678px;width:985px;height:1px;background:#dadada;"></div>
<div style="position:absolute;left:21px;top:694px;width:985px;height:1px;background:#dadada;"></div>
<div style="position:absolute;left:21px;top:710px;width:985px;height:1px;background:#dadada;"></div>
<div style="position:absolute;left:21px;top:726px;width:985px;height:1px;background:#dadada;"></div>
<div style="position:absolute;left:21px;top:742px;width:985px;height:1px;background:#dadada;"></div>
<div style="position:absolute;left:0px;top:182px;width:20px;height:1px;background:#e6e6e6;"></div>
<div style="position:absolute;left:0px;top:198px;width:20px;height:1px;background:#e6e6e6;"></div>
<div style="position:absolute;left:0px;top:214px;width:20px;height:1px;background:#e6e6e6;"></div>
<div style="position:absolute;left:0px;top:230px;width:20px;height:1px;background:#e6e6e6;"></div>
<div style="position:absolute;left:0px;top:246px;width:20px;height:1px;background:#e6e6e6;"></div>
<div style="position:absolute;left:0px;top:262px;width:20px;height:1px;background:#e6e6e6;"></div>
<div style="position:absolute;left:0px;top:278px;width:20px;height:1px;background:#e6e6e6;"></div>
<div style="position:absolute;left:0px;top:294px;width:20px;height:1px;background:#e6e6e6;"></div>
<div style="position:absolute;left:0px;top:310px;width:20px;height:1px;background:#e6e6e6;"></div>
<div style="position:absolute;left:0px;top:326px;width:20px;height:1px;background:#e6e6e6;"></div>
<div style="position:absolute;left:0px;top:342px;width:20px;height:1px;background:#e6e6e6;"></div>
<div style="position:absolute;left:0px;top:358px;width:20px;height:1px;background:#e6e6e6;"></div>
<div style="position:absolute;left:0px;top:374px;width:20px;height:1px;background:#e6e6e6;"></div>
<div style="position:absolute;left:0px;top:390px;width:20px;height:1px;background:#e6e6e6;"></div>
<div style="position:absolute;left:0px;top:406px;width:20px;height:1px;background:#e6e6e6;"></div>
<div style="position:absolute;left:0px;top:422px;width:20px;height:1px;background:#e6e6e6;"></div>
<div style="position:absolute;left:0px;top:438px;width:20px;height:1px;background:#e6e6e6;"></div>
<div style="position:absolute;left:0px;top:454px;width:20px;height:1px;background:#e6e6e6;"></div>
<div style="position:absolute;left:0px;top:470px;width:20px;height:1px;background:#e6e6e6;"></div>
<div style="position:absolute;left:0px;top:486px;width:20px;height:1px;background:#e6e6e6;"></div>
<div style="position:absolute;left:0px;top:502px;width:20px;height:1px;background:#e6e6e6;"></div>
<div style="position:absolute;left:0px;top:518px;width:20px;height:1px;background:#e6e6e6;"></div>
<div style="position:absolute;left:0px;top:534px;width:20px;height:1px;background:#e6e6e6;"></div>
<div style="position:absolute;left:0px;top:550px;width:20px;height:1px;background:#e6e6e6;"></div>
<div style="position:absolute;left:0px;top:566px;width:20px;height:1px;background:#e6e6e6;"></div>
<div style="position:absolute;left:0px;top:582px;width:20px;height:1px;background:#e6e6e6;"></div>
<div style="position:absolute;left:0px;top:598px;width:20px;height:1px;background:#e6e6e6;"></div>
<div style="position:absolute;left:0px;top:614px;width:20px;height:1px;background:#e6e6e6;"></div>
<div style="position:absolute;left:0px;top:630px;width:20px;height:1px;background:#e6e6e6;"></div>
<div style="position:absolute;left:0px;top:646px;width:20px;height:1px;background:#e6e6e6;"></div>
<div style="position:absolute;left:0px;top:662px;width:20px;height:1px;background:#e6e6e6;"></div>
<div style="position:absolute;left:0px;top:678px;width:20px;height:1px;background:#e6e6e6;"></div>
<div style="position:absolute;left:0px;top:694px;width:20px;height:1px;background:#e6e6e6;"></div>
<div style="position:absolute;left:0px;top:710px;width:20px;height:1px;background:#e6e6e6;"></div>
<div style="position:absolute;left:0px;top:726px;width:20px;height:1px;background:#e6e6e6;"></div>
<div style="position:absolute;left:0px;top:742px;width:20px;height:1px;background:#e6e6e6;"></div>
<div style="position:absolute;left:20px;top:166px;width:1px;height:581px;background:#ababab;"></div>
<div style="position:absolute;left:20px;top:151px;width:1px;height:15px;background:#dcdcdc;"></div>
<div style="position:absolute;left:0px;top:166px;width:1006px;height:1px;background:#ababab;"></div>
<div style="position:absolute;left:1006px;top:166px;width:1px;height:581px;background:#ababab;"></div>
<svg style="left:0;top:151px" width="20" height="15"><polygon points="17,3 17,13 7,13" fill="#dfdfdf"/></svg>
<div style="position:absolute;left:657px;top:151px;width:59px;height:15px;background:#e1e1e1;"></div>
<div style="position:absolute;left:656px;top:165px;width:61px;height:2px;background:#217346;"></div>
<div style="position:absolute;left:210px;top:262px;width:267px;height:16px;background:#ffff00;"></div>
<div style="position:absolute;left:210px;top:278px;width:267px;height:16px;background:#ffff00;"></div>
<div style="position:absolute;left:210px;top:294px;width:267px;height:16px;background:#ffff00;"></div>
<div style="position:absolute;left:210px;top:310px;width:267px;height:16px;background:#ffff00;"></div>
<div style="position:absolute;left:210px;top:326px;width:267px;height:16px;background:#ffff00;"></div>
<div style="position:absolute;left:21px;top:246px;width:456px;height:1px;background:#000;"></div>
<div style="position:absolute;left:21px;top:262px;width:456px;height:1px;background:#000;"></div>
<div style="position:absolute;left:21px;top:278px;width:456px;height:1px;background:#000;"></div>
<div style="position:absolute;left:21px;top:294px;width:456px;height:1px;background:#000;"></div>
<div style="position:absolute;left:21px;top:310px;width:456px;height:1px;background:#000;"></div>
<div style="position:absolute;left:21px;top:326px;width:456px;height:1px;background:#000;"></div>
<div style="position:absolute;left:21px;top:342px;width:456px;height:1px;background:#000;"></div>
<div style="position:absolute;left:210px;top:246px;width:1px;height:97px;background:#000;"></div>
<div style="position:absolute;left:275px;top:246px;width:1px;height:97px;background:#000;"></div>
<div style="position:absolute;left:335px;top:246px;width:1px;height:97px;background:#000;"></div>
<div style="position:absolute;left:406px;top:246px;width:1px;height:97px;background:#000;"></div>
<div style="position:absolute;left:476px;top:246px;width:1px;height:97px;background:#000;"></div>
<div style="position:absolute;left:210px;top:534px;width:267px;height:16px;background:#ffff00;"></div>
<div style="position:absolute;left:210px;top:550px;width:267px;height:16px;background:#ffff00;"></div>
<div style="position:absolute;left:210px;top:566px;width:267px;height:16px;background:#ffff00;"></div>
<div style="position:absolute;left:210px;top:582px;width:267px;height:16px;background:#ffff00;"></div>
<div style="position:absolute;left:210px;top:598px;width:267px;height:16px;background:#ffff00;"></div>
<div style="position:absolute;left:210px;top:614px;width:267px;height:16px;background:#ffff00;"></div>
<div style="position:absolute;left:210px;top:630px;width:267px;height:16px;background:#ffff00;"></div>
<div style="position:absolute;left:210px;top:646px;width:267px;height:16px;background:#ffff00;"></div>
<div style="position:absolute;left:210px;top:662px;width:267px;height:16px;background:#ffff00;"></div>
<div style="position:absolute;left:21px;top:518px;width:456px;height:1px;background:#000;"></div>
<div style="position:absolute;left:21px;top:534px;width:456px;height:1px;background:#000;"></div>
<div style="position:absolute;left:21px;top:550px;width:456px;height:1px;background:#000;"></div>
<div style="position:absolute;left:21px;top:566px;width:456px;height:1px;background:#000;"></div>
<div style="position:absolute;left:21px;top:582px;width:456px;height:1px;background:#000;"></div>
<div style="position:absolute;left:21px;top:598px;width:456px;height:1px;background:#000;"></div>
<div style="position:absolute;left:21px;top:614px;width:456px;height:1px;background:#000;"></div>
<div style="position:absolute;left:21px;top:630px;width:456px;height:1px;background:#000;"></div>
<div style="position:absolute;left:21px;top:646px;width:456px;height:1px;background:#000;"></div>
<div style="position:absolute;left:21px;top:662px;width:456px;height:1px;background:#000;"></div>
<div style="position:absolute;left:21px;top:678px;width:456px;height:1px;background:#000;"></div>
<div style="position:absolute;left:210px;top:518px;width:1px;height:161px;background:#000;"></div>
<div style="position:absolute;left:275px;top:518px;width:1px;height:161px;background:#000;"></div>
<div style="position:absolute;left:335px;top:518px;width:1px;height:161px;background:#000;"></div>
<div style="position:absolute;left:406px;top:518px;width:1px;height:161px;background:#000;"></div>
<div style="position:absolute;left:476px;top:518px;width:1px;height:161px;background:#000;"></div>
<div style="position:absolute;left:536px;top:182px;width:61px;height:17px;background:#000;"></div>
<div style="position:absolute;left:537px;top:183px;width:59px;height:15px;background:#ffff00;"></div>
<div style="position:absolute;left:561px;top:373px;width:46px;height:1px;background:#1a6fc2;"></div>
<div style="position:absolute;left:0px;top:20px;width:47px;height:20px;background:#217346;"></div>
<div style="position:absolute;left:50px;top:20px;width:48px;height:20px;border:1px solid #d5d5d5;border-bottom:none;background:#fff"></div>
<div style="position:absolute;left:68px;top:44px;width:1px;height:67px;background:#e1e1e1;"></div>
<div style="position:absolute;left:233px;top:44px;width:1px;height:67px;background:#e1e1e1;"></div>
<div style="position:absolute;left:445px;top:44px;width:1px;height:67px;background:#e1e1e1;"></div>
<div style="position:absolute;left:557px;top:44px;width:1px;height:67px;background:#e1e1e1;"></div>
<div style="position:absolute;left:702px;top:44px;width:1px;height:67px;background:#e1e1e1;"></div>
<div style="position:absolute;left:810px;top:44px;width:1px;height:67px;background:#e1e1e1;"></div>
<div style="position:absolute;left:960px;top:44px;width:1px;height:67px;background:#e1e1e1;"></div>
<div style="position:absolute;left:138px;top:73px;width:1px;height:17px;background:#e1e1e1;"></div>
<div style="position:absolute;left:172px;top:73px;width:1px;height:17px;background:#e1e1e1;"></div>
<div style="position:absolute;left:293px;top:49px;width:1px;height:16px;background:#e1e1e1;"></div>
<div style="position:absolute;left:293px;top:74px;width:1px;height:16px;background:#e1e1e1;"></div>
<div style="position:absolute;left:336px;top:48px;width:1px;height:44px;background:#e1e1e1;"></div>
<div style="position:absolute;left:514px;top:74px;width:1px;height:18px;background:#e1e1e1;"></div>
<div style="position:absolute;left:4px;top:122px;width:80px;height:19px;border:1px solid #c6c6c6;background:#fff"></div>
<svg style="left:0;top:0" width="1" height="1"></svg>
<div style="position:absolute;left:109px;top:122px;width:87px;height:19px;border:1px solid #d4d4d4;background:#fff"></div>
<div style="position:absolute;left:200px;top:122px;width:818px;height:19px;border:1px solid #d4d4d4;border-right:1px solid #c6c6c6;background:#fff"></div>
<svg style="left:0;top:0" width="1024" height="150" viewBox="0 0 1024 150"><path d="M8,3.5 L17,2 L17,15 L8,13.5 Z" fill="#217346"/><rect x="15" y="4" width="6.5" height="9.5" fill="#fff" stroke="#217346" stroke-width="1"/><path d="M17,6.5h4M17,9h4M17,11.5h4M19,4v9.5" stroke="#217346" stroke-width="0.8"/><path d="M9.8,5.8 L14,12 M14,5.8 L9.8,12" stroke="#fff" stroke-width="1.5"/><path d="M32.8,14 V3.5 H42.5 V14" fill="none" stroke="#7a3a9c" stroke-width="1.4"/><rect x="32.5" y="9" width="10" height="1.3" fill="#7a3a9c"/><rect x="32" y="13.3" width="11" height="0.8" fill="#c9a8d8"/><rect x="35.9" y="11.8" width="2" height="2.3" fill="#7a3a9c"/><path d="M57,6 Q62,2.5 65.5,7 Q67,11.5 63,13.5" fill="none" stroke="#2b6cb8" stroke-width="1.6"/><path d="M55.5,6.5 L59.5,3 M55.5,6.5 L59.5,9.5" stroke="#2b6cb8" stroke-width="1.6"/><polygon points="71.5,7.5 75.5,7.5 73.5,10.0" fill="#555"/><path d="M97,6.5 Q92,3 89,7 Q87.5,11 90.5,13" fill="none" stroke="#b8b8b8" stroke-width="1.5"/><path d="M98.5,6.5 L95,3 M98.5,6.5 L95,9.5" stroke="#b8b8b8" stroke-width="1.5"/><polygon points="103.0,7.5 107.0,7.5 105,10.0" fill="#aaa"/><path d="M120,11.5 L124.5,2.5 L129,11.5 M121.5,8.5 H127.5" fill="none" stroke="#444" stroke-width="1.3"/><rect x="118" y="12" width="13" height="2.2" fill="#e00"/><polygon points="135.0,7.5 139.0,7.5 137,10.0" fill="#555"/><path d="M161,3.5 H151 L156,8.5 L151,13.5 H161" fill="none" stroke="#444" stroke-width="1.6"/><polygon points="167.0,7.5 171.0,7.5 169,10.0" fill="#555"/><text x="183" y="8" font-family="Liberation Sans" font-size="6.5" fill="#aaa">A</text><text x="183" y="15" font-family="Liberation Sans" font-size="6.5" fill="#aaa">Z</text><path d="M188,5.5 H195 L192.5,9 V12 H190.5 V9 Z" fill="#aaa"/><polygon points="198.25,7 202.75,7 200.5,9.8" fill="#444"/><rect x="214.3" y="6.8" width="4.8" height="1" fill="#555"/><polygon points="214.7,9.8 218.7,9.8 216.7,12.0" fill="#444"/><text x="916" y="13.5" font-family="Liberation Sans" font-weight="bold" font-size="10.5" fill="#555">?</text><rect x="937.5" y="5.5" width="9.5" height="7.5" fill="none" stroke="#555" stroke-width="1"/><rect x="937.5" y="5.5" width="9.5" height="1.5" fill="#555"/><path d="M940.5,11 L942.2,9.2 L944,11" fill="none" stroke="#555" stroke-width="0.9"/><rect x="962" y="9.5" width="7.5" height="1.3" fill="#555"/><rect x="985.5" y="7.5" width="6" height="5.5" fill="none" stroke="#555" stroke-width="1.1"/><path d="M987.5,7.5 V5.5 H993.5 V11 H991.5" fill="none" stroke="#555" stroke-width="1.1"/><path d="M1008.5,5.5 L1016,13 M1016,5.5 L1008.5,13" stroke="#555" stroke-width="1.3"/><rect x="10.3" y="48.8" width="19.3" height="19.7" fill="#dedede"/><rect x="13.5" y="50" width="13" height="1.8" fill="#fff"/><rect x="14.5" y="47" width="11" height="3.5" fill="#c4c4c4"/><rect x="18.5" y="45.5" width="3" height="2.5" fill="none" stroke="#c4c4c4" stroke-width="1"/><path d="M22.5,55.5 H28.5 L32.3,59.3 V70 H22.5 Z" fill="#f5f1f5" stroke="#d0d0d0" stroke-width="1"/><path d="M28.5,55.5 V59.3 H32.3" fill="none" stroke="#d0d0d0" stroke-width="1"/><polygon points="17.5,90.5 21.5,90.5 19.5,93.0" fill="#b5b5b5"/><path d="M42,45.5 L48.5,53.5 M49,45.5 L42.5,53.5" stroke="#555" stroke-width="1.3"/><circle cx="42" cy="54.5" r="2.2" fill="none" stroke="#3c7bc4" stroke-width="1.1"/><circle cx="48.5" cy="54.5" r="2.2" fill="none" stroke="#3c7bc4" stroke-width="1.1"/><path d="M39.5,64.5 H44 L45.5,66 V73 H39.5 Z" fill="#fff" stroke="#555" stroke-width="0.9"/><path d="M44.5,67.5 H49 L51,69.5 V75.5 H44.5 Z" fill="#fff" stroke="#555" stroke-width="0.9"/><path d="M41,67 v1.5 M41,70 v1.5 M46,72 h3.5 M46,74 h3.5 M48,70.5 v1.2" stroke="#3c7bc4" stroke-width="0.9"/><polygon points="57.5,69.5 61.5,69.5 59.5,72.0" fill="#555"/><path d="M40,89 L45,84 L48.5,87.5 L43.5,92.5 Z" fill="#cfcfcf"/><path d="M46,83 L50,79.5 L52.5,82 L49,86 Z" fill="#bdbdbd"/><rect x="72.5" y="49.5" width="123" height="17" fill="#fff" stroke="#c6c6c6" stroke-width="1"/><rect x="160.5" y="49.5" width="1" height="17" fill="#c6c6c6"/><polygon points="152.25,57 156.75,57 154.5,59.5" fill="#555"/><polygon points="187.05,57 191.55,57 189.3,59.5" fill="#555"/><path d="M200.5,62.2 L203.8,54.3 L207,62.2 M201.8,59.5 H205.8" fill="none" stroke="#555" stroke-width="1.2"/><polygon points="207.5,54 210.5,54 209,52" fill="#3c7bc4"/><path d="M219,62.2 L221.6,56 L224.2,62.2 M220,60 H223.2" fill="none" stroke="#555" stroke-width="1.1"/><polygon points="225,52 228.5,52 226.75,54" fill="#3c7bc4"/><text x="77" y="86" font-family="Liberation Sans" font-weight="bold" font-size="10" fill="#555">B</text><text x="95" y="86" font-family="Liberation Serif" font-style="italic" font-size="10.5" fill="#555">I</text><text x="112" y="85.5" font-family="Liberation Sans" font-size="9.5" fill="#555">U</text><rect x="112" y="87" width="7" height="1" fill="#555"/><polygon points="127.0,82 131.0,82 129,84.5" fill="#666"/><rect x="145.5" y="77.5" width="9.5" height="9.5" fill="none" stroke="#c8c8c8" stroke-width="1" stroke-dasharray="1.2,1"/><circle cx="150.2" cy="82.2" r="1.8" fill="none" stroke="#d5d5d5" stroke-width="0.8"/><polygon points="161.5,82 165.5,82 163.5,84.5" fill="#bbb"/><path d="M180,82 L184.5,77.5 L189,82 L184.5,86 Z" fill="#f3f3f3" stroke="#c8c8c8" stroke-width="1"/><path d="M184,76 V79 M188.5,80 Q191,82 190,85" fill="none" stroke="#c8c8c8" stroke-width="1"/><rect x="178" y="86" width="13" height="2.5" fill="#e3e3e3"/><polygon points="196.0,82 200.0,82 198,84.5" fill="#bbb"/><path d="M208.7,85.5 L212.6,77.5 L216.5,85.5 M210.2,82.5 H215" fill="none" stroke="#444" stroke-width="1.2"/><rect x="206" y="86" width="12" height="2.7" fill="#ff0000"/><polygon points="223.0,82 227.0,82 225,84.5" fill="#555"/><path d="M59.5,110.5 V105 H65" fill="none" stroke="#999" stroke-width="0.9"/><path d="M61.5,106.5 L64.5,109.5 M64.5,107 V110 H61.5" fill="none" stroke="#888" stroke-width="0.9"/><path d="M225.5,110.5 V105 H231" fill="none" stroke="#999" stroke-width="0.9"/><path d="M227.5,106.5 L230.5,109.5 M230.5,107 V110 H227.5" fill="none" stroke="#888" stroke-width="0.9"/><path d="M437.5,110.5 V105 H443" fill="none" stroke="#999" stroke-width="0.9"/><path d="M439.5,106.5 L442.5,109.5 M442.5,107 V110 H439.5" fill="none" stroke="#888" stroke-width="0.9"/><path d="M548.5,110.5 V105 H554" fill="none" stroke="#999" stroke-width="0.9"/><path d="M550.5,106.5 L553.5,109.5 M553.5,107 V110 H550.5" fill="none" stroke="#888" stroke-width="0.9"/><rect x="241" y="51" width="11" height="1" fill="#9a9a9a"/><rect x="241" y="53.5" width="9" height="1" fill="#cfcfcf"/><rect x="241" y="56" width="11" height="1" fill="#9a9a9a"/><rect x="242" y="53.5" width="9" height="1" fill="#cfcfcf"/><rect x="258" y="54.5" width="12" height="1" fill="#9a9a9a"/><rect x="258" y="57" width="10" height="1" fill="#9a9a9a"/><rect x="258" y="59.5" width="12" height="1" fill="#9a9a9a"/><rect x="276" y="58.5" width="11" height="1" fill="#9a9a9a"/><rect x="276" y="61" width="9" height="1" fill="#9a9a9a"/><rect x="276" y="63.5" width="11" height="1" fill="#9a9a9a"/><text x="0" y="0" transform="translate(302,63) rotate(-45)" font-family="Liberation Sans" font-size="7.5" fill="#999">ab</text><path d="M305,63 L313,55 M310,55 H313 V58" fill="none" stroke="#999" stroke-width="1"/><polygon points="316.0,57 320.0,57 318,59.5" fill="#bbb"/><rect x="241" y="78.5" width="11" height="1" fill="#9a9a9a"/><rect x="241" y="81" width="8" height="1" fill="#9a9a9a"/><rect x="241" y="83.5" width="11" height="1" fill="#9a9a9a"/><rect x="241" y="86" width="8" height="1" fill="#cfcfcf"/><rect x="258" y="78.5" width="12" height="1" fill="#9a9a9a"/><rect x="258" y="81" width="8" height="1" fill="#9a9a9a"/><rect x="258" y="83.5" width="12" height="1" fill="#9a9a9a"/><rect x="258" y="86" width="8" height="1" fill="#cfcfcf"/><rect x="260" y="81" width="8" height="1" fill="#9a9a9a"/><rect x="260" y="86" width="8" height="1" fill="#cfcfcf"/><rect x="276" y="78.5" width="11" height="1" fill="#9a9a9a"/><rect x="276" y="81" width="11" height="1" fill="#cfcfcf"/><rect x="276" y="83.5" width="11" height="1" fill="#9a9a9a"/><rect x="276" y="86" width="11" height="1" fill="#cfcfcf"/><path d="M300.5,82.5 L304,79.5 M300.5,82.5 L304,85.5 M300.5,82.5 H306" fill="none" stroke="#9a9a9a" stroke-width="1"/><rect x="305" y="78.5" width="8" height="1" fill="#9a9a9a"/><rect x="305" y="81" width="8" height="1" fill="#9a9a9a"/><rect x="305" y="83.5" width="8" height="1" fill="#9a9a9a"/><rect x="305" y="86" width="8" height="1" fill="#cfcfcf"/><path d="M322.5,82.5 L319,79.5 M322.5,82.5 L319,85.5 M317,82.5 H322.5" fill="none" stroke="#9a9a9a" stroke-width="1"/><rect x="323" y="78.5" width="8" height="1" fill="#9a9a9a"/><rect x="323" y="81" width="8" height="1" fill="#9a9a9a"/><rect x="323" y="83.5" width="8" height="1" fill="#9a9a9a"/><rect x="323" y="86" width="8" height="1" fill="#cfcfcf"/><rect x="342.5" y="50.5" width="9" height="3" fill="#f0eef0" stroke="#aaa" stroke-width="1"/><rect x="342.5" y="56.5" width="9" height="6" fill="#f0eef0" stroke="#aaa" stroke-width="1"/><path d="M343,52 H355 M344,58.5 H350 M344,60.5 H350 M353,57 Q356,58.5 353.5,60.5 M352,60.5 h2" fill="none" stroke="#aaa" stroke-width="0.9"/><rect x="342.5" y="76.5" width="11.5" height="11.5" fill="#f2f0f2" stroke="#aaa" stroke-width="1"/><path d="M342.5,79.5 H354 M342.5,85 H354 M348.2,76.5 V79.5 M348.2,85 V88" fill="none" stroke="#aaa" stroke-width="1"/><path d="M345,82.2 H352" stroke="#aaa" stroke-width="0.8" stroke-dasharray="1,1"/><polygon points="433.5,82 437.5,82 435.5,84.5" fill="#bbb"/><rect x="449.5" y="49.5" width="104" height="17" fill="#fff" stroke="#dadada" stroke-width="1"/><polygon points="545.0,57 549.0,57 547,59.5" fill="#bbb"/><text x="454.5" y="88" font-family="Liberation Sans" font-size="12.5" fill="#a6a6a6">$</text><polygon points="469.0,82 473.0,82 471,84.5" fill="#bbb"/><text x="479.5" y="88" font-family="Liberation Sans" font-size="11.5" fill="#a6a6a6">%</text><text x="500.5" y="85.5" font-family="Liberation Sans" font-weight="bold" font-size="12" fill="#a6a6a6">,</text><path d="M525,79.5 L522,81.5 L525,83.5 M522,81.5 H526" fill="none" stroke="#aaa" stroke-width="0.9"/><text x="526.5" y="83" font-family="Liberation Sans" font-size="7" fill="#aaa">.0</text><text x="522" y="89" font-family="Liberation Sans" font-size="7" fill="#aaa">.00</text><text x="539" y="83" font-family="Liberation Sans" font-size="7" fill="#aaa">.00</text><path d="M542,87 L545,85 L542,83 M538.5,85 H545" fill="none" stroke="#aaa" stroke-width="0.9"/><text x="544" y="89" font-family="Liberation Sans" font-size="7" fill="#aaa">.0</text><rect x="578.5" y="46.5" width="5" height="4.5" fill="#f4eff4" stroke="#d0d0d0" stroke-width="0.8"/><rect x="584.0" y="46.5" width="5" height="4.5" fill="#f4eff4" stroke="#d0d0d0" stroke-width="0.8"/><rect x="589.5" y="46.5" width="5" height="4.5" fill="#f4eff4" stroke="#d0d0d0" stroke-width="0.8"/><rect x="595.0" y="46.5" width="5" height="4.5" fill="#f4eff4" stroke="#d0d0d0" stroke-width="0.8"/><rect x="578.5" y="51.5" width="5" height="4.5" fill="#f4eff4" stroke="#d0d0d0" stroke-width="0.8"/><rect x="584.0" y="51.5" width="5" height="4.5" fill="#f4eff4" stroke="#d0d0d0" stroke-width="0.8"/><rect x="589.5" y="51.5" width="5" height="4.5" fill="#f4eff4" stroke="#d0d0d0" stroke-width="0.8"/><rect x="595.0" y="51.5" width="5" height="4.5" fill="#f4eff4" stroke="#d0d0d0" stroke-width="0.8"/><rect x="578.5" y="56.5" width="5" height="4.5" fill="#f4eff4" stroke="#d0d0d0" stroke-width="0.8"/><rect x="584.0" y="56.5" width="5" height="4.5" fill="#f4eff4" stroke="#d0d0d0" stroke-width="0.8"/><rect x="589.5" y="56.5" width="5" height="4.5" fill="#f4eff4" stroke="#d0d0d0" stroke-width="0.8"/><rect x="595.0" y="56.5" width="5" height="4.5" fill="#f4eff4" stroke="#d0d0d0" stroke-width="0.8"/><rect x="578.5" y="61.5" width="5" height="4.5" fill="#f4eff4" stroke="#d0d0d0" stroke-width="0.8"/><rect x="584.0" y="61.5" width="5" height="4.5" fill="#f4eff4" stroke="#d0d0d0" stroke-width="0.8"/><rect x="589.5" y="61.5" width="5" height="4.5" fill="#f4eff4" stroke="#d0d0d0" stroke-width="0.8"/><rect x="595.0" y="61.5" width="5" height="4.5" fill="#f4eff4" stroke="#d0d0d0" stroke-width="0.8"/><rect x="584" y="46.5" width="5" height="19.5" fill="#b8b8b8"/><rect x="584" y="51.5" width="11" height="4.5" fill="#b8b8b8"/><rect x="589.5" y="60" width="12.5" height="10" fill="#f4eff4" stroke="#c8c8c8" stroke-width="1"/><path d="M592.5,64 H599 M592.5,66 H599 M597.5,62 L594,68" stroke="#999" stroke-width="0.8"/><rect x="630.5" y="48.0" width="5" height="4.3" fill="#f4eff4" stroke="#c8c8c8" stroke-width="0.8"/><rect x="635.5" y="48.0" width="5" height="4.3" fill="#f4eff4" stroke="#c8c8c8" stroke-width="0.8"/><rect x="640.5" y="48.0" width="5" height="4.3" fill="#f4eff4" stroke="#c8c8c8" stroke-width="0.8"/><rect x="645.5" y="48.0" width="5" height="4.3" fill="#f4eff4" stroke="#c8c8c8" stroke-width="0.8"/><rect x="630.5" y="52.3" width="5" height="4.3" fill="#f4eff4" stroke="#c8c8c8" stroke-width="0.8"/><rect x="635.5" y="52.3" width="5" height="4.3" fill="#dedede" stroke="#c8c8c8" stroke-width="0.8"/><rect x="640.5" y="52.3" width="5" height="4.3" fill="#dedede" stroke="#c8c8c8" stroke-width="0.8"/><rect x="645.5" y="52.3" width="5" height="4.3" fill="#dedede" stroke="#c8c8c8" stroke-width="0.8"/><rect x="630.5" y="56.6" width="5" height="4.3" fill="#f4eff4" stroke="#c8c8c8" stroke-width="0.8"/><rect x="635.5" y="56.6" width="5" height="4.3" fill="#dedede" stroke="#c8c8c8" stroke-width="0.8"/><rect x="640.5" y="56.6" width="5" height="4.3" fill="#dedede" stroke="#c8c8c8" stroke-width="0.8"/><rect x="645.5" y="56.6" width="5" height="4.3" fill="#dedede" stroke="#c8c8c8" stroke-width="0.8"/><rect x="630.5" y="60.9" width="5" height="4.3" fill="#f4eff4" stroke="#c8c8c8" stroke-width="0.8"/><rect x="635.5" y="60.9" width="5" height="4.3" fill="#dedede" stroke="#c8c8c8" stroke-width="0.8"/><rect x="640.5" y="60.9" width="5" height="4.3" fill="#dedede" stroke="#c8c8c8" stroke-width="0.8"/><rect x="645.5" y="60.9" width="5" height="4.3" fill="#dedede" stroke="#c8c8c8" stroke-width="0.8"/><polygon points="654,53 654,58.5 648,63 645.5,60.5" fill="#b3b3b3"/><polygon points="644.5,61.5 646,60 647.5,61.5 646,63" fill="#b3b3b3"/><circle cx="642.3" cy="65.5" r="2.3" fill="#f4eff4" stroke="#b3b3b3" stroke-width="0.9"/><polygon points="636,70.3 644.5,70 644,67 640,65.5" fill="#b3b3b3"/><rect x="670.5" y="46.5" width="20" height="17.5" fill="#f4eff4" stroke="#c8c8c8" stroke-width="1"/><rect x="674" y="50" width="13" height="10.5" fill="#dedede"/><path d="M670.5,50 H690.5 M670.5,60.5 H690.5 M674,46.5 V64 M687,46.5 V64" stroke="#c8c8c8" stroke-width="0.8"/><polygon points="694,51.5 694,57.0 688,61.5 685.5,59.0" fill="#b3b3b3"/><polygon points="684.5,60.0 686,58.5 687.5,60.0 686,61.5" fill="#b3b3b3"/><circle cx="682.3" cy="64.0" r="2.3" fill="#f4eff4" stroke="#b3b3b3" stroke-width="0.9"/><polygon points="676,68.8 684.5,68.5 684,65.5 680,64.0" fill="#b3b3b3"/><polygon points="612.75,90.5 616.25,90.5 614.5,92.5" fill="#bbb"/><polygon points="651.25,90.5 654.75,90.5 653,92.5" fill="#bbb"/><polygon points="692.25,90.5 695.75,90.5 694,92.5" fill="#bbb"/><rect x="712.5" y="46.5" width="6" height="4.5" fill="#f4eff4" stroke="#bdbdbd" stroke-width="1"/><rect x="718.5" y="46.5" width="6" height="4.5" fill="#f4eff4" stroke="#bdbdbd" stroke-width="1"/><rect x="721.5" y="53.5" width="6" height="4" fill="#d8d8d8" stroke="#bdbdbd" stroke-width="1"/><rect x="727.5" y="53.5" width="6" height="4" fill="#d8d8d8" stroke="#bdbdbd" stroke-width="1"/><path d="M713,55.5 L715.5,53.5 M713,55.5 L715.5,57.5 M713,55.5 H718.5" fill="none" stroke="#aaa" stroke-width="1"/><rect x="712.5" y="59.5" width="6" height="4.2" fill="#f4eff4" stroke="#bdbdbd" stroke-width="1"/><rect x="718.5" y="59.5" width="6" height="4.2" fill="#f4eff4" stroke="#bdbdbd" stroke-width="1"/><rect x="712.5" y="63.7" width="6" height="4.2" fill="#f4eff4" stroke="#bdbdbd" stroke-width="1"/><rect x="718.5" y="63.7" width="6" height="4.2" fill="#f4eff4" stroke="#bdbdbd" stroke-width="1"/><polygon points="720.0,90.5 724.0,90.5 722,93.0" fill="#bbb"/><rect x="745.5" y="46.5" width="6" height="4.5" fill="#f4eff4" stroke="#bdbdbd" stroke-width="1"/><rect x="751.5" y="46.5" width="6" height="4.5" fill="#f4eff4" stroke="#bdbdbd" stroke-width="1"/><rect x="750.5" y="53.5" width="6" height="4" fill="#d8d8d8" stroke="#bdbdbd" stroke-width="1"/><path d="M757,51 L768,61 M768,51 L757,61" stroke="#b5b5b5" stroke-width="1.3"/><rect x="745.5" y="60.5" width="6" height="4" fill="#f4eff4" stroke="#bdbdbd" stroke-width="1"/><rect x="751.5" y="60.5" width="6" height="4" fill="#f4eff4" stroke="#bdbdbd" stroke-width="1"/><rect x="745.5" y="64.5" width="6" height="4" fill="#f4eff4" stroke="#bdbdbd" stroke-width="1"/><rect x="751.5" y="64.5" width="6" height="4" fill="#f4eff4" stroke="#bdbdbd" stroke-width="1"/><polygon points="753.0,90.5 757.0,90.5 755,93.0" fill="#bbb"/><path d="M779.5,47.5 H796.5 M779.5,47.5 L782,45.5 M779.5,47.5 L782,49.5 M796.5,47.5 L794,45.5 M796.5,47.5 L794,49.5" fill="none" stroke="#3c7bc4" stroke-width="1"/><path d="M778.5,45 V50 M797.5,45 V50" stroke="#3c7bc4" stroke-width="0.8"/><rect x="778.5" y="50.5" width="22.5" height="15.5" fill="#fff" stroke="#888" stroke-width="1"/><path d="M784.5,50.5 V66 M790.5,50.5 V66 M796.5,50.5 V66 M778.5,55 H801 M778.5,62 H801" stroke="#aaa" stroke-width="0.8"/><rect x="785" y="55" width="5.5" height="7" fill="#3c7bc4"/><path d="M778.5,66 Q778.5,70 782,70 H787 Q790,70 790.5,66 Q791,70 794,70 H797 Q800,70 801,66" fill="none" stroke="#bbb" stroke-width="0.9"/><polygon points="787.75,90.5 792.25,90.5 790,93.0" fill="#444"/><path d="M829,45.5 H817.5 L823.5,51 L817.5,56.5 H829" fill="none" stroke="#444" stroke-width="1.7"/><polygon points="880.0,51 884.0,51 882,53.5" fill="#555"/><rect x="818.5" y="63.5" width="10.5" height="12" fill="#f4f4f4" stroke="#c8c8c8" stroke-width="1"/><rect x="818.5" y="63.5" width="10.5" height="2" fill="#c8c8c8"/><path d="M823.7,67.5 V73 M821.3,70.8 L823.7,73.2 L826.1,70.8" fill="none" stroke="#bbb" stroke-width="1"/><polygon points="847.25,69.5 850.75,69.5 849,71.5" fill="#ccc"/><path d="M818,88.5 L824.5,82 L829,86.5 L822.5,93 H820.5 Z" fill="#e97c8e"/><path d="M822.5,93 H829" stroke="#666" stroke-width="0.8"/><polygon points="856.75,87.5 860.25,87.5 858.5,89.5" fill="#444"/><text x="892.5" y="55.7" font-family="Liberation Sans" font-size="11" fill="#b5b5b5">A</text><text x="893" y="67.3" font-family="Liberation Sans" font-size="11" fill="#b5b5b5">Z</text><path d="M903,53 H916 L911,58.5 V64.5 H908 V58.5 Z" fill="#b5b5b5"/><polygon points="915.75,90.5 919.25,90.5 917.5,92.5" fill="#ccc"/><rect x="932" y="48" width="4" height="3" fill="#5a5a5a"/><rect x="943" y="48" width="4" height="3" fill="#5a5a5a"/><path d="M931,51 H937.5 V66 H929 V56 Z" fill="#5a5a5a"/><path d="M948,51 H941.5 V66 H950 V56 Z" fill="#5a5a5a"/><rect x="937" y="53" width="5" height="6" fill="#5a5a5a"/><path d="M930.5,58 V65.5 M948.5,58 V65.5" stroke="#a8a8a8" stroke-width="1"/><polygon points="950.75,90.5 954.25,90.5 952.5,92.5" fill="#444"/><path d="M1009.5,109.5 L1013,106 L1016.5,109.5" fill="none" stroke="#555" stroke-width="1.4"/><polygon points="72.0,130 78.0,130 75,133.5" fill="#777"/><circle cx="97.5" cy="128.5" r="0.7" fill="#999"/><circle cx="97.5" cy="132" r="0.7" fill="#999"/><circle cx="97.5" cy="135.5" r="0.7" fill="#999"/><path d="M118.5,127.5 L131,139 M131,127.5 L118.5,139" stroke="#727272" stroke-width="2.1"/><path d="M146.5,132.5 L151,138 L161,127.5" fill="none" stroke="#727272" stroke-width="2.8"/><text x="174" y="138.5" font-family="Liberation Serif" font-style="italic" font-weight="bold" font-size="16" fill="#6a6a6a">f</text><text x="181" y="138.5" font-family="Liberation Serif" font-style="italic" font-weight="bold" font-size="13" fill="#6a6a6a">x</text><path d="M1008,130 L1012.5,134.5 L1017,130" fill="none" stroke="#666" stroke-width="2"/></svg>
<div style="position:absolute;left:1007px;top:151px;width:17px;height:596px;background:#f0f0f0;"></div>
<div style="position:absolute;left:1009px;top:153px;width:11px;height:11px;border:1px solid #c6c6c6;background:#fff"></div>
<div style="position:absolute;left:1009px;top:736px;width:11px;height:10px;border:1px solid #c6c6c6;background:#fff"></div>
<div style="position:absolute;left:1009px;top:282px;width:11px;height:135px;border:1px solid #c6c6c6;background:#fff"></div>
<div style="position:absolute;left:81px;top:743px;width:50px;height:22px;background:#fff;"></div>
<div style="position:absolute;left:80px;top:743px;width:1px;height:23px;background:#c6c6c6;"></div>
<div style="position:absolute;left:131px;top:747px;width:1px;height:19px;background:#c6c6c6;"></div>
<div style="position:absolute;left:80px;top:765px;width:52px;height:2px;background:#217346;"></div>
<div style="position:absolute;left:628px;top:752px;width:11px;height:11px;border:1px solid #c6c6c6;background:#fff"></div>
<div style="position:absolute;left:640px;top:752px;width:331px;height:11px;border:1px solid #c6c6c6;background:#fff"></div>
<div style="position:absolute;left:973px;top:753px;width:22px;height:11px;background:#e6e6e6;"></div>
<div style="position:absolute;left:995px;top:752px;width:10px;height:11px;border:1px solid #c6c6c6;background:#fff"></div>
<svg style="left:0;top:0" width="1024" height="819" viewBox="0 0 1024 819"><polygon points="1011.5,162 1017.5,162 1014.5,158.5" fill="#666"/><polygon points="1011.5,739.5 1017.5,739.5 1014.5,743" fill="#666"/><polygon points="25,756 25,762 21.5,759" fill="#c0c0c0"/><polygon points="44.5,756 44.5,762 48,759" fill="#c0c0c0"/><circle cx="164.7" cy="758" r="6" fill="none" stroke="#c6c6c6" stroke-width="1"/><path d="M161,758 H168.4 M164.7,754.3 V761.7" stroke="#c6c6c6" stroke-width="1.3"/><circle cx="615.5" cy="754.5" r="0.7" fill="#999"/><circle cx="615.5" cy="758" r="0.7" fill="#999"/><circle cx="615.5" cy="761.5" r="0.7" fill="#999"/><polygon points="636,755 636,761 632,758" fill="#555"/><polygon points="999,755 999,761 1003,758" fill="#555"/><rect x="800.5" y="772.5" width="10" height="10" fill="none" stroke="#fff" stroke-width="1"/><path d="M803.8,772.5 V782.5 M807.2,772.5 V782.5 M800.5,775.8 H810.5 M800.5,779.2 H810.5" stroke="#fff" stroke-width="1"/><rect x="830.5" y="772.5" width="11" height="10" fill="none" stroke="#fff" stroke-width="1"/><rect x="833" y="774.5" width="6" height="6" fill="none" stroke="#fff" stroke-width="1"/><path d="M834,777.5 H838" stroke="#fff" stroke-width="0.8"/><rect x="861.5" y="772.5" width="10.5" height="10" fill="none" stroke="#fff" stroke-width="1"/><rect x="862" y="773" width="3" height="5.5" fill="#fff"/><rect x="866" y="773" width="3" height="5.5" fill="#fff"/><rect x="886" y="777.5" width="4.5" height="1.3" fill="#1a5c38"/><rect x="894" y="777" width="80" height="1.2" fill="#c9dccf"/><rect x="933.5" y="775" width="1.6" height="5" fill="#c9dccf"/><path d="M977,777.8 H983.5 M980.25,774.5 V781" stroke="#1a5c38" stroke-width="1.6"/><text x="996" y="781.5" font-family="Liberation Sans" font-size="10" fill="#b5d2bf" textLength="22" lengthAdjust="spacingAndGlyphs">100%</text><rect x="38" y="787" width="276" height="32" fill="#333333"/><rect x="433" y="787" width="36" height="32" fill="#333333"/><rect x="397" y="817" width="32" height="2" fill="#76b9ed"/><rect x="433" y="817" width="38" height="2" fill="#76b9ed"/><rect x="1020.5" y="787" width="1" height="32" fill="#555"/><path d="M13,797.5 L18.7,796.7 V802.8 H13 Z M19.6,796.6 L26,795.7 V802.8 H19.6 Z M13,803.7 H18.7 V809.8 L13,809 Z M19.6,803.7 H26 V810.8 L19.6,809.9 Z" fill="#fff"/><circle cx="54.5" cy="802.5" r="7" fill="none" stroke="#fff" stroke-width="2"/><rect x="294.5" y="796" width="5" height="9" rx="2.5" fill="none" stroke="#888" stroke-width="1"/><path d="M293,803 Q293,807.5 297,807.5 Q301,807.5 301,803 M297,807.5 V809.5 M294.5,809.5 H299.5" fill="none" stroke="#888" stroke-width="1"/><rect x="328" y="797.5" width="10" height="11" fill="none" stroke="#fff" stroke-width="1.2"/><path d="M326,799.5 H325 V806.5 H326 M340,799.5 H341 V806.5 H340" fill="none" stroke="#fff" stroke-width="1.1"/><path d="M366,797 L373,793 L380,796 V806 L373,811 L365,807 Z" fill="#2a55a8"/><path d="M366,799 L372,796 M368,804 L375,800 M370,795 V808" stroke="#9cc3ee" stroke-width="0.9"/><circle cx="377.5" cy="806" r="5" fill="#1e9be8" stroke="#fff" stroke-width="0.6"/><text x="375.3" y="809" font-family="Liberation Sans" font-weight="bold" font-size="7.5" fill="#fff">E</text><circle cx="413" cy="802.5" r="9" fill="#db4437"/><path d="M413,802.5 L405.2,807 A9,9 0 0 0 417.5,810.3 Z" fill="#0f9d58"/><path d="M413,802.5 L421.9,802.5 A9,9 0 0 1 417.5,810.3 Z M413,802.5 L413,793.5 A9,9 0 0 1 421.9,802.5 Z" fill="#f4b400"/><path d="M413,793.5 A9,9 0 0 0 405.2,807 L413,802.5 Z" fill="#db4437"/><circle cx="413" cy="802.5" r="4" fill="#fff"/><circle cx="413" cy="802.5" r="3" fill="#4285f4"/><rect x="414.5" y="804" width="8" height="8" fill="#ddd" stroke="#aaa" stroke-width="0.6"/><path d="M443,797 L452,795 V811 L443,809 Z" fill="#1e7145"/><rect x="451" y="797" width="9.5" height="12" fill="none" stroke="#1e7145" stroke-width="1.2"/><path d="M451,800 H460.5 M451,803 H460.5 M451,806 H460.5 M455.5,797 V809" stroke="#1e7145" stroke-width="0.9"/><path d="M445,799.5 L450,806.5 M450,799.5 L445,806.5" stroke="#fff" stroke-width="1.4"/><path d="M897.5,805 L901.5,801 L905.5,805" fill="none" stroke="#fff" stroke-width="1.1"/><rect x="914.5" y="798.5" width="12" height="7.5" fill="none" stroke="#fff" stroke-width="1"/><path d="M918,806 V808.5 M916,808.5 H922 M914.5,800.5 H917.5 V802.5 H914.5" fill="none" stroke="#fff" stroke-width="1"/><path d="M991.5,796.5 H1003.5 V805 H998 L994.5,808 V805 H991.5 Z" fill="#fff"/><path d="M993.5,799 H1001.5 M993.5,801 H1001.5 M993.5,803 H999" stroke="#000" stroke-width="0.8"/><circle cx="1003.8" cy="808.3" r="5.8" fill="#262626" stroke="#777" stroke-width="1.2"/><text x="1001.5" y="812" font-family="Liberation Sans" font-weight="bold" font-size="8.5" fill="#fff">1</text></svg>
<div class="t" style="left:47.49px;top:148.66px;font-size:10.5px;color:#555;font-weight:normal;">A</div>
<div class="t" style="left:107.49px;top:148.66px;font-size:10.5px;color:#555;font-weight:normal;">B</div>
<div class="t" style="left:172.20px;top:148.66px;font-size:10.5px;color:#555;font-weight:normal;">C</div>
<div class="t" style="left:239.70px;top:148.66px;font-size:10.5px;color:#555;font-weight:normal;">D</div>
<div class="t" style="left:302.49px;top:148.66px;font-size:10.5px;color:#555;font-weight:normal;">E</div>
<div class="t" style="left:368.29px;top:148.66px;font-size:10.5px;color:#555;font-weight:normal;">F</div>
<div class="t" style="left:437.91px;top:148.66px;font-size:10.5px;color:#555;font-weight:normal;">G</div>
<div class="t" style="left:503.20px;top:148.66px;font-size:10.5px;color:#555;font-weight:normal;">H</div>
<div class="t" style="left:565.54px;top:148.66px;font-size:10.5px;color:#555;font-weight:normal;">I</div>
<div class="t" style="left:624.38px;top:148.66px;font-size:10.5px;color:#555;font-weight:normal;">J</div>
<div class="t" style="left:683.20px;top:148.66px;font-size:10.5px;color:#217346;font-weight:bold;">K</div>
<div class="t" style="left:739.58px;top:148.66px;font-size:10.5px;color:#555;font-weight:normal;">L</div>
<div class="t" style="left:789.12px;top:148.66px;font-size:10.5px;color:#555;font-weight:normal;">M</div>
<div class="t" style="left:840.70px;top:148.66px;font-size:10.5px;color:#555;font-weight:normal;">N</div>
<div class="t" style="left:891.91px;top:148.66px;font-size:10.5px;color:#555;font-weight:normal;">O</div>
<div class="t" style="left:943.99px;top:148.66px;font-size:10.5px;color:#555;font-weight:normal;">P</div>
<div class="t" style="left:994.41px;top:148.66px;font-size:10.5px;color:#555;font-weight:normal;">Q</div>
<div class="t" style="left:5.25px;top:165.36px;font-size:10.5px;color:#555;font-weight:normal;transform:scaleX(0.9200);transform-origin:0 0;">32</div>
<div class="t" style="left:5.25px;top:181.36px;font-size:10.5px;color:#555;font-weight:normal;transform:scaleX(0.9200);transform-origin:0 0;">33</div>
<div class="t" style="left:5.25px;top:197.36px;font-size:10.5px;color:#555;font-weight:normal;transform:scaleX(0.9200);transform-origin:0 0;">34</div>
<div class="t" style="left:5.25px;top:213.36px;font-size:10.5px;color:#555;font-weight:normal;transform:scaleX(0.9200);transform-origin:0 0;">35</div>
<div class="t" style="left:5.25px;top:229.36px;font-size:10.5px;color:#555;font-weight:normal;transform:scaleX(0.9200);transform-origin:0 0;">36</div>
<div class="t" style="left:5.25px;top:245.36px;font-size:10.5px;color:#555;font-weight:normal;transform:scaleX(0.9200);transform-origin:0 0;">37</div>
<div class="t" style="left:5.25px;top:261.36px;font-size:10.5px;color:#555;font-weight:normal;transform:scaleX(0.9200);transform-origin:0 0;">38</div>
<div class="t" style="left:5.25px;top:277.36px;font-size:10.5px;color:#555;font-weight:normal;transform:scaleX(0.9200);transform-origin:0 0;">39</div>
<div class="t" style="left:5.25px;top:293.36px;font-size:10.5px;color:#555;font-weight:normal;transform:scaleX(0.9200);transform-origin:0 0;">40</div>
<div class="t" style="left:5.25px;top:309.36px;font-size:10.5px;color:#555;font-weight:normal;transform:scaleX(0.9200);transform-origin:0 0;">41</div>
<div class="t" style="left:5.25px;top:325.36px;font-size:10.5px;color:#555;font-weight:normal;transform:scaleX(0.9200);transform-origin:0 0;">42</div>
<div class="t" style="left:5.25px;top:341.36px;font-size:10.5px;color:#555;font-weight:normal;transform:scaleX(0.9200);transform-origin:0 0;">43</div>
<div class="t" style="left:5.25px;top:357.36px;font-size:10.5px;color:#555;font-weight:normal;transform:scaleX(0.9200);transform-origin:0 0;">44</div>
<div class="t" style="left:5.25px;top:373.36px;font-size:10.5px;color:#555;font-weight:normal;transform:scaleX(0.9200);transform-origin:0 0;">45</div>
<div class="t" style="left:5.25px;top:389.36px;font-size:10.5px;color:#555;font-weight:normal;transform:scaleX(0.9200);transform-origin:0 0;">46</div>
<div class="t" style="left:5.25px;top:405.36px;font-size:10.5px;color:#555;font-weight:normal;transform:scaleX(0.9200);transform-origin:0 0;">47</div>
<div class="t" style="left:5.25px;top:421.36px;font-size:10.5px;color:#555;font-weight:normal;transform:scaleX(0.9200);transform-origin:0 0;">48</div>
<div class="t" style="left:5.25px;top:437.36px;font-size:10.5px;color:#555;font-weight:normal;transform:scaleX(0.9200);transform-origin:0 0;">49</div>
<div class="t" style="left:5.25px;top:453.36px;font-size:10.5px;color:#555;font-weight:normal;transform:scaleX(0.9200);transform-origin:0 0;">50</div>
<div class="t" style="left:5.25px;top:469.36px;font-size:10.5px;color:#555;font-weight:normal;transform:scaleX(0.9200);transform-origin:0 0;">51</div>
<div class="t" style="left:5.25px;top:485.36px;font-size:10.5px;color:#555;font-weight:normal;transform:scaleX(0.9200);transform-origin:0 0;">52</div>
<div class="t" style="left:5.25px;top:501.36px;font-size:10.5px;color:#555;font-weight:normal;transform:scaleX(0.9200);transform-origin:0 0;">53</div>
<div class="t" style="left:5.25px;top:517.36px;font-size:10.5px;color:#555;font-weight:normal;transform:scaleX(0.9200);transform-origin:0 0;">54</div>
<div class="t" style="left:5.25px;top:533.36px;font-size:10.5px;color:#555;font-weight:normal;transform:scaleX(0.9200);transform-origin:0 0;">55</div>
<div class="t" style="left:5.25px;top:549.36px;font-size:10.5px;color:#555;font-weight:normal;transform:scaleX(0.9200);transform-origin:0 0;">56</div>
<div class="t" style="left:5.25px;top:565.36px;font-size:10.5px;color:#555;font-weight:normal;transform:scaleX(0.9200);transform-origin:0 0;">57</div>
<div class="t" style="left:5.25px;top:581.36px;font-size:10.5px;color:#555;font-weight:normal;transform:scaleX(0.9200);transform-origin:0 0;">58</div>
<div class="t" style="left:5.25px;top:597.36px;font-size:10.5px;color:#555;font-weight:normal;transform:scaleX(0.9200);transform-origin:0 0;">59</div>
<div class="t" style="left:5.25px;top:613.36px;font-size:10.5px;color:#555;font-weight:normal;transform:scaleX(0.9200);transform-origin:0 0;">60</div>
<div class="t" style="left:5.25px;top:629.36px;font-size:10.5px;color:#555;font-weight:normal;transform:scaleX(0.9200);transform-origin:0 0;">61</div>
<div class="t" style="left:5.25px;top:645.36px;font-size:10.5px;color:#555;font-weight:normal;transform:scaleX(0.9200);transform-origin:0 0;">62</div>
<div class="t" style="left:5.25px;top:661.36px;font-size:10.5px;color:#555;font-weight:normal;transform:scaleX(0.9200);transform-origin:0 0;">63</div>
<div class="t" style="left:5.25px;top:677.36px;font-size:10.5px;color:#555;font-weight:normal;transform:scaleX(0.9200);transform-origin:0 0;">64</div>
<div class="t" style="left:5.25px;top:693.36px;font-size:10.5px;color:#555;font-weight:normal;transform:scaleX(0.9200);transform-origin:0 0;">65</div>
<div class="t" style="left:5.25px;top:709.36px;font-size:10.5px;color:#555;font-weight:normal;transform:scaleX(0.9200);transform-origin:0 0;">66</div>
<div class="t" style="left:5.25px;top:725.36px;font-size:10.5px;color:#555;font-weight:normal;transform:scaleX(0.9200);transform-origin:0 0;">67</div>
<div class="t" style="left:82.70px;top:165.19px;font-size:11px;color:#000;font-weight:bold;transform:scaleX(0.7545);transform-origin:0 0;">B.</div>
<div class="t" style="left:97.20px;top:165.19px;font-size:11px;color:#000;font-weight:normal;transform:scaleX(1.0737);transform-origin:0 0;">Multiply your</div>
<div class="t" style="left:166.00px;top:165.19px;font-size:11px;color:#ff0000;font-weight:bold;transform:scaleX(0.9504);transform-origin:0 0;">lowest digit</div>
<div class="t" style="left:225.60px;top:165.19px;font-size:11px;color:#000;font-weight:normal;transform:scaleX(1.0079);transform-origin:0 0;">(other than 0) from your student  ID number above  by 10</div>
<div class="t" style="left:82.70px;top:181.19px;font-size:11px;color:#000;font-weight:normal;transform:scaleX(1.0302);transform-origin:0 0;">and insert in the in the box provided:</div>
<div class="t" style="left:22.90px;top:213.19px;font-size:11px;color:#000;font-weight:normal;transform:scaleX(1.0199);transform-origin:0 0;">Complete the Production Budget for April - June and the quarter in total.</div>
<div class="t" style="left:23.00px;top:245.19px;font-size:11px;color:#000;font-weight:bold;transform:scaleX(0.9222);transform-origin:0 0;">Production Budget</div>
<div class="t" style="left:232.49px;top:245.19px;font-size:11px;color:#000;font-weight:normal;">April</div>
<div class="t" style="left:232.49px;top:517.19px;font-size:11px;color:#000;font-weight:normal;">April</div>
<div class="t" style="left:295.61px;top:245.19px;font-size:11px;color:#000;font-weight:normal;">May</div>
<div class="t" style="left:295.61px;top:517.19px;font-size:11px;color:#000;font-weight:normal;">May</div>
<div class="t" style="left:359.57px;top:245.19px;font-size:11px;color:#000;font-weight:normal;">June</div>
<div class="t" style="left:359.57px;top:517.19px;font-size:11px;color:#000;font-weight:normal;">June</div>
<div class="t" style="left:430.38px;top:245.19px;font-size:11px;color:#000;font-weight:normal;">Total</div>
<div class="t" style="left:430.38px;top:517.19px;font-size:11px;color:#000;font-weight:normal;">Total</div>
<div class="t" style="left:23.00px;top:261.19px;font-size:11px;color:#000;font-weight:normal;transform:scaleX(0.9780);transform-origin:0 0;">Sales in units</div>
<div class="t" style="left:23.00px;top:277.19px;font-size:11px;color:#000;font-weight:normal;transform:scaleX(1.0231);transform-origin:0 0;">Desired ending inventory</div>
<div class="t" style="left:23.00px;top:293.19px;font-size:11px;color:#000;font-weight:normal;transform:scaleX(1.0352);transform-origin:0 0;">Total required</div>
<div class="t" style="left:23.00px;top:309.19px;font-size:11px;color:#000;font-weight:normal;transform:scaleX(1.0225);transform-origin:0 0;">Beginning inventory</div>
<div class="t" style="left:23.00px;top:325.19px;font-size:11px;color:#000;font-weight:bold;transform:scaleX(0.9330);transform-origin:0 0;">Total units to produce</div>
<div class="t" style="left:478.70px;top:229.19px;font-size:11px;color:#1a6fc2;font-weight:bold;font-style:italic;transform:scaleX(0.9256);transform-origin:0 0;">Hint:  You will need to calculate July's sales</div>
<div class="t" style="left:478.70px;top:245.19px;font-size:11px;color:#1a6fc2;font-weight:bold;font-style:italic;transform:scaleX(0.9315);transform-origin:0 0;">in units in order to calculate the desired ending</div>
<div class="t" style="left:478.70px;top:261.19px;font-size:11px;color:#1a6fc2;font-weight:bold;font-style:italic;transform:scaleX(0.9219);transform-origin:0 0;">inventory for June.</div>
<div class="t" style="left:142.50px;top:357.19px;font-size:11px;color:#1a6fc2;font-weight:bold;font-style:italic;transform:scaleX(0.9238);transform-origin:0 0;">Hint:  The next three budgets are all manufacturing cost budgets, and use units to be</div>
<div class="t" style="left:560.75px;top:357.19px;font-size:11px;color:#1a6fc2;font-weight:bold;font-style:italic;transform:scaleX(0.9227);transform-origin:0 0;">produced</div>
<div class="t" style="left:611.00px;top:357.19px;font-size:11px;color:#1a6fc2;font-weight:bold;font-style:italic;transform:scaleX(0.9191);transform-origin:0 0;">, not sold.</div>
<div class="t" style="left:23.00px;top:389.19px;font-size:11px;color:#000;font-weight:bold;transform:scaleX(0.9491);transform-origin:0 0;">Requirement 3:</div>
<div class="t" style="left:23.00px;top:405.19px;font-size:11px;color:#000;font-weight:normal;transform:scaleX(1.0071);transform-origin:0 0;">The standard quantity of polyresin in 4 lbs. per pot.  The standard price for polyresin in $4 per lb.</div>
<div class="t" style="left:23.00px;top:421.19px;font-size:11px;color:#000;font-weight:normal;transform:scaleX(1.0144);transform-origin:0 0;">The company wants to always have 20% of the materials required for the following month</div>
<div class="t" style="left:23.00px;top:437.19px;font-size:11px;color:#000;font-weight:normal;transform:scaleX(1.0091);transform-origin:0 0;">on hand at the end of each month.   At the end of March, there was  200 pounds of polyresin on hand.  (April's beginning inventory)</div>
<div class="t" style="left:23.00px;top:469.19px;font-size:11px;color:#000;font-weight:normal;transform:scaleX(1.0171);transform-origin:0 0;">Complete the direct materials purchases budget for April - June and the quarter in total.</div>
<div class="t" style="left:478.70px;top:501.19px;font-size:11px;color:#1a6fc2;font-weight:bold;font-style:italic;transform:scaleX(0.9373);transform-origin:0 0;">Hint:  You will need to calculate units to be</div>
<div class="t" style="left:478.70px;top:517.19px;font-size:11px;color:#1a6fc2;font-weight:bold;font-style:italic;transform:scaleX(0.9239);transform-origin:0 0;">produced for July in order to calculate the</div>
<div class="t" style="left:478.70px;top:533.19px;font-size:11px;color:#1a6fc2;font-weight:bold;font-style:italic;transform:scaleX(0.9269);transform-origin:0 0;">material needs for June.</div>
<div class="t" style="left:23.00px;top:517.19px;font-size:11px;color:#000;font-weight:bold;transform:scaleX(0.9274);transform-origin:0 0;">Direct Materials Purchases Budget</div>
<div class="t" style="left:23.00px;top:533.19px;font-size:11px;color:#000;font-weight:normal;transform:scaleX(1.0087);transform-origin:0 0;">Units to be produced</div>
<div class="t" style="left:23.00px;top:549.19px;font-size:11px;color:#000;font-weight:normal;transform:scaleX(1.0065);transform-origin:0 0;">Pounds of DM per unit produced</div>
<div class="t" style="left:23.00px;top:565.19px;font-size:11px;color:#000;font-weight:normal;transform:scaleX(1.0373);transform-origin:0 0;">Total needed for production</div>
<div class="t" style="left:23.00px;top:581.19px;font-size:11px;color:#000;font-weight:normal;transform:scaleX(1.0272);transform-origin:0 0;">Desired ending inventory</div>
<div class="t" style="left:23.00px;top:597.19px;font-size:11px;color:#000;font-weight:normal;transform:scaleX(1.0505);transform-origin:0 0;">Total material requirement</div>
<div class="t" style="left:23.00px;top:613.19px;font-size:11px;color:#000;font-weight:normal;transform:scaleX(1.0277);transform-origin:0 0;">Beginning inventory</div>
<div class="t" style="left:23.00px;top:629.19px;font-size:11px;color:#000;font-weight:bold;transform:scaleX(0.9204);transform-origin:0 0;">Total pounds to purchase</div>
<div class="t" style="left:23.00px;top:645.19px;font-size:11px;color:#000;font-weight:normal;transform:scaleX(0.9931);transform-origin:0 0;">Cost per pound</div>
<div class="t" style="left:23.00px;top:661.19px;font-size:11px;color:#000;font-weight:bold;transform:scaleX(0.9359);transform-origin:0 0;">Total cost of DM</div>
<div class="t" style="left:23.00px;top:709.19px;font-size:11px;color:#000;font-weight:bold;transform:scaleX(0.9566);transform-origin:0 0;">Requirement 4:</div>
<div class="t" style="left:23.00px;top:725.19px;font-size:11px;color:#000;font-weight:normal;transform:scaleX(0.9949);transform-origin:0 0;">The standard labor rate is $18 per hour and the standard time for each pot is 1 hour.</div>
<div class="t" style="left:453.30px;top:-0.04px;font-size:10.5px;color:#444;font-weight:normal;transform:scaleX(0.8530);transform-origin:0 0;">Project 3 Su 2017 (4) - Excel</div>
<div class="t" style="left:15.60px;top:20.36px;font-size:10.5px;color:#fff;font-weight:normal;transform:scaleX(0.7392);transform-origin:0 0;">FILE</div>
<div class="t" style="left:61.00px;top:19.96px;font-size:10.5px;color:#217346;font-weight:normal;transform:scaleX(0.8571);transform-origin:0 0;">HOME</div>
<div class="t" style="left:112.00px;top:19.96px;font-size:10.5px;color:#444;font-weight:normal;transform:scaleX(0.7305);transform-origin:0 0;">INSERT</div>
<div class="t" style="left:165.00px;top:19.96px;font-size:10.5px;color:#444;font-weight:normal;transform:scaleX(0.8133);transform-origin:0 0;">PAGE LAYOUT</div>
<div class="t" style="left:248.00px;top:19.96px;font-size:10.5px;color:#444;font-weight:normal;transform:scaleX(0.8433);transform-origin:0 0;">FORMULAS</div>
<div class="t" style="left:320.00px;top:19.96px;font-size:10.5px;color:#444;font-weight:normal;transform:scaleX(0.8695);transform-origin:0 0;">DATA</div>
<div class="t" style="left:366.00px;top:19.96px;font-size:10.5px;color:#444;font-weight:normal;transform:scaleX(0.7725);transform-origin:0 0;">REVIEW</div>
<div class="t" style="left:421.00px;top:19.96px;font-size:10.5px;color:#444;font-weight:normal;transform:scaleX(0.8196);transform-origin:0 0;">VIEW</div>
<div class="t" style="left:995.70px;top:17.86px;font-size:10.5px;color:#444;font-weight:normal;transform:scaleX(0.8969);transform-origin:0 0;">Sign in</div>
<div class="t" style="left:9.00px;top:68.66px;font-size:10.5px;color:#a3a3a3;font-weight:normal;transform:scaleX(0.8191);transform-origin:0 0;">Paste</div>
<div class="t" style="left:7.60px;top:97.53px;font-size:10px;color:#5a5a5a;font-weight:normal;transform:scaleX(0.9343);transform-origin:0 0;">Clipboard</div>
<div class="t" style="left:135.00px;top:97.53px;font-size:10px;color:#5a5a5a;font-weight:normal;transform:scaleX(0.9493);transform-origin:0 0;">Font</div>
<div class="t" style="left:312.00px;top:97.53px;font-size:10px;color:#5a5a5a;font-weight:normal;transform:scaleX(0.9445);transform-origin:0 0;">Alignment</div>
<div class="t" style="left:479.00px;top:97.53px;font-size:10px;color:#5a5a5a;font-weight:normal;transform:scaleX(0.8994);transform-origin:0 0;">Number</div>
<div class="t" style="left:617.70px;top:97.53px;font-size:10px;color:#5a5a5a;font-weight:normal;transform:scaleX(0.8188);transform-origin:0 0;">Styles</div>
<div class="t" style="left:747.00px;top:97.53px;font-size:10px;color:#5a5a5a;font-weight:normal;transform:scaleX(0.8096);transform-origin:0 0;">Cells</div>
<div class="t" style="left:870.00px;top:97.53px;font-size:10px;color:#5a5a5a;font-weight:normal;transform:scaleX(0.9811);transform-origin:0 0;">Editing</div>
<div class="t" style="left:74.50px;top:48.36px;font-size:10.5px;color:#222;font-weight:normal;transform:scaleX(0.9104);transform-origin:0 0;">Calibri</div>
<div class="t" style="left:163.60px;top:48.36px;font-size:10.5px;color:#222;font-weight:normal;transform:scaleX(0.7702);transform-origin:0 0;">11</div>
<div class="t" style="left:357.60px;top:48.16px;font-size:10.5px;color:#a3a3a3;font-weight:normal;transform:scaleX(0.8829);transform-origin:0 0;">Wrap Text</div>
<div class="t" style="left:357.60px;top:72.36px;font-size:10.5px;color:#a3a3a3;font-weight:normal;transform:scaleX(0.9093);transform-origin:0 0;">Merge &amp; Center</div>
<div class="t" style="left:452.00px;top:48.36px;font-size:10.5px;color:#a3a3a3;font-weight:normal;transform:scaleX(0.8298);transform-origin:0 0;">General</div>
<div class="t" style="left:565.20px;top:68.66px;font-size:10.5px;color:#a3a3a3;font-weight:normal;transform:scaleX(0.9287);transform-origin:0 0;">Conditional</div>
<div class="t" style="left:562.70px;top:81.36px;font-size:10.5px;color:#a3a3a3;font-weight:normal;transform:scaleX(0.9265);transform-origin:0 0;">Formatting</div>
<div class="t" style="left:620.80px;top:68.66px;font-size:10.5px;color:#a3a3a3;font-weight:normal;transform:scaleX(0.8547);transform-origin:0 0;">Format as</div>
<div class="t" style="left:627.00px;top:81.36px;font-size:10.5px;color:#a3a3a3;font-weight:normal;transform:scaleX(0.8722);transform-origin:0 0;">Table</div>
<div class="t" style="left:673.20px;top:68.66px;font-size:10.5px;color:#a3a3a3;font-weight:normal;transform:scaleX(0.8456);transform-origin:0 0;">Cell</div>
<div class="t" style="left:666.00px;top:81.36px;font-size:10.5px;color:#a3a3a3;font-weight:normal;transform:scaleX(0.8044);transform-origin:0 0;">Styles</div>
<div class="t" style="left:710.00px;top:68.66px;font-size:10.5px;color:#a3a3a3;font-weight:normal;transform:scaleX(0.8757);transform-origin:0 0;">Insert</div>
<div class="t" style="left:742.00px;top:68.66px;font-size:10.5px;color:#a3a3a3;font-weight:normal;transform:scaleX(0.8893);transform-origin:0 0;">Delete</div>
<div class="t" style="left:774.00px;top:68.66px;font-size:10.5px;color:#333;font-weight:normal;transform:scaleX(0.9018);transform-origin:0 0;">Format</div>
<div class="t" style="left:832.00px;top:42.36px;font-size:10.5px;color:#333;font-weight:normal;transform:scaleX(0.9259);transform-origin:0 0;">AutoSum</div>
<div class="t" style="left:832.00px;top:59.86px;font-size:10.5px;color:#b5b5b5;font-weight:normal;transform:scaleX(0.9686);transform-origin:0 0;">Fill</div>
<div class="t" style="left:832.00px;top:77.86px;font-size:10.5px;color:#333;font-weight:normal;transform:scaleX(0.9564);transform-origin:0 0;">Clear</div>
<div class="t" style="left:891.00px;top:68.66px;font-size:10.5px;color:#a3a3a3;font-weight:normal;transform:scaleX(0.9251);transform-origin:0 0;">Sort &amp;</div>
<div class="t" style="left:891.00px;top:81.36px;font-size:10.5px;color:#a3a3a3;font-weight:normal;transform:scaleX(1.0710);transform-origin:0 0;">Filter</div>
<div class="t" style="left:925.00px;top:68.66px;font-size:10.5px;color:#333;font-weight:normal;transform:scaleX(0.9223);transform-origin:0 0;">Find &amp;</div>
<div class="t" style="left:923.00px;top:81.36px;font-size:10.5px;color:#333;font-weight:normal;transform:scaleX(0.8565);transform-origin:0 0;">Select</div>
<div class="t" style="left:9.50px;top:123.36px;font-size:10.5px;color:#222;font-weight:normal;">K6</div>
<div class="t" style="left:210.00px;top:123.36px;font-size:10.5px;color:#111;font-weight:normal;">7</div>
<div class="t" style="left:90.00px;top:747.99px;font-size:11px;color:#217346;font-weight:bold;transform:scaleX(0.8759);transform-origin:0 0;">Sheet1</div>
<div class="t" style="left:6.70px;top:767.91px;font-size:9.5px;color:#eef5f0;font-weight:normal;transform:scaleX(0.7825);transform-origin:0 0;-webkit-text-stroke:0.2px #eef5f0;">ENTER</div>
<div class="t" style="left:67.50px;top:793.87px;font-size:12.5px;color:#a8a8a8;font-weight:normal;transform:scaleX(0.9232);transform-origin:0 0;">Type here to search</div>
<div class="t" style="left:937.00px;top:785.41px;font-size:9.5px;color:#fff;font-weight:normal;transform:scaleX(0.9441);transform-origin:0 0;">12:21 PM</div>
<div class="t" style="left:934.90px;top:799.91px;font-size:9.5px;color:#fff;font-weight:normal;transform:scaleX(0.9961);transform-origin:0 0;">7/28/2017</div>
</body></html>
